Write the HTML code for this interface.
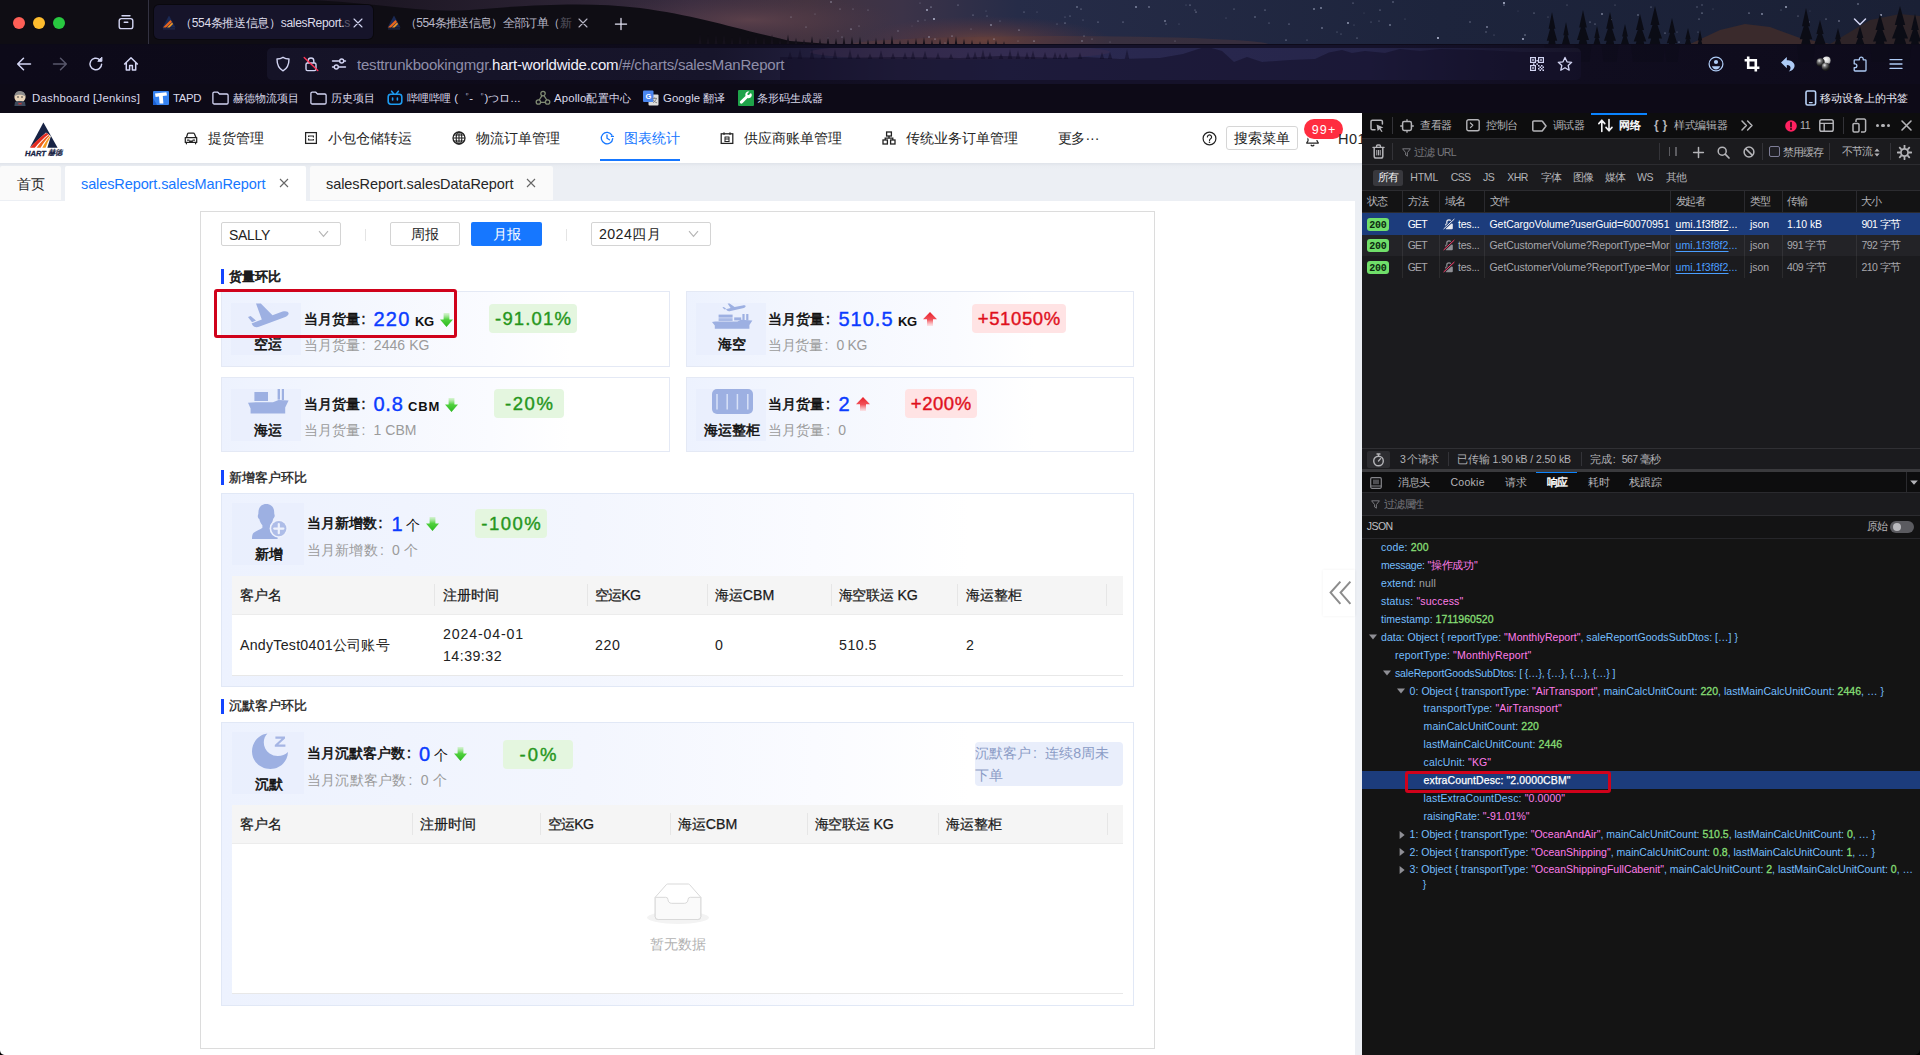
<!DOCTYPE html>
<html lang="zh">
<head>
<meta charset="utf-8">
<title>salesReport</title>
<style>
*{box-sizing:border-box;margin:0;padding:0}
html,body{width:1920px;height:1055px;overflow:hidden;background:#fff}
body{font-family:"Liberation Sans",sans-serif;font-size:14px;color:#222;position:relative}
.abs{position:absolute;display:block}
svg{overflow:visible}
.t{position:absolute;display:block;white-space:nowrap;font-family:"Liberation Sans",sans-serif}
.t span{font-family:inherit}
#chrome{position:absolute;left:0;top:0;width:1920px;height:113px;background:#120f1f;overflow:hidden}
#sky{position:absolute;left:0;top:0}
#navbar{position:absolute;left:0;top:44px;width:1920px;height:40px;background:rgba(20,17,38,.80);border-top:1px solid rgba(10,8,20,.55)}
#bmbar{position:absolute;left:0;top:84px;width:1920px;height:29px;background:rgba(16,13,28,.90)}
#urlbar{position:absolute;left:267px;top:48px;width:1314px;height:32px;border-radius:5px;background:rgba(40,38,72,.55)}
#app{position:absolute;left:0;top:113px;width:1361.7px;height:942px;background:#fff;overflow:hidden}
#apphead{position:absolute;left:0;top:0;width:1363px;height:50px;background:#fff}
#tabsbar{position:absolute;left:0;top:50px;width:1363px;height:38px;background:linear-gradient(180deg,#dfe3ea 0,#eaedf2 3px,#eceff4 6px)}
#dev{position:absolute;left:1361px;top:113px;width:559px;height:942px;overflow:hidden}
#devbg{position:absolute;left:.7px;top:0;width:559px;height:942px;background:#141414}
</style>
</head>
<body>
<div id="chrome">
<svg id="sky" width="1920" height="113" viewBox="0 0 1920 113">
<defs>
<linearGradient id="skyg" x1="0" x2="1" y1="0" y2="0">
<stop offset="0" stop-color="#15121b"/><stop offset=".2" stop-color="#1d1724"/><stop offset=".3" stop-color="#2c2334"/><stop offset=".36" stop-color="#3a2d40"/><stop offset=".42" stop-color="#43333f"/><stop offset=".47" stop-color="#3c3348"/><stop offset=".53" stop-color="#262c48"/><stop offset=".75" stop-color="#1d243c"/><stop offset="1" stop-color="#1a2035"/>
</linearGradient>
<radialGradient id="glow" cx="0.5" cy="0.5" r="0.5"><stop offset="0" stop-color="#7d4a3a" stop-opacity=".7"/><stop offset=".55" stop-color="#643a3c" stop-opacity=".38"/><stop offset="1" stop-color="#5a3540" stop-opacity="0"/></radialGradient>
<radialGradient id="cloud" cx="0.5" cy="0.5" r="0.5"><stop offset="0" stop-color="#60434c" stop-opacity=".85"/><stop offset="1" stop-color="#4a3545" stop-opacity="0"/></radialGradient>
<linearGradient id="ub" x1="0" x2="1" y1="0" y2="0"><stop offset="0" stop-color="#151327"/><stop offset=".34" stop-color="#17152b"/><stop offset=".42" stop-color="#211e3c"/><stop offset=".48" stop-color="#2a2748"/><stop offset=".56" stop-color="#2b2a52"/><stop offset=".84" stop-color="#26254a"/><stop offset=".93" stop-color="#1c1a36"/><stop offset="1" stop-color="#171529"/></linearGradient>
<clipPath id="ubc"><rect x="267" y="48" width="1314" height="32" rx="5"/></clipPath>
<clipPath id="top"><rect x="0" y="0" width="1920" height="44"/></clipPath>
</defs>
<g clip-path="url(#top)">
<rect width="1920" height="44" fill="url(#skyg)"/>
<ellipse cx="750" cy="20" rx="150" ry="26" fill="url(#cloud)"/>
<ellipse cx="985" cy="40" rx="125" ry="24" fill="url(#glow)"/>
<ellipse cx="1060" cy="45" rx="210" ry="9" fill="#6a4035" opacity=".3"/>
<circle cx="1149" cy="7" r="0.9" fill="#dfe6ff" opacity="0.38"/>
<circle cx="1702" cy="5" r="0.7" fill="#dfe6ff" opacity="0.38"/>
<circle cx="1353" cy="3" r="0.6" fill="#dfe6ff" opacity="0.60"/>
<circle cx="1057" cy="24" r="0.4" fill="#dfe6ff" opacity="0.85"/>
<circle cx="927" cy="10" r="0.9" fill="#dfe6ff" opacity="0.70"/>
<circle cx="859" cy="26" r="0.4" fill="#dfe6ff" opacity="0.94"/>
<circle cx="842" cy="37" r="0.5" fill="#dfe6ff" opacity="0.60"/>
<circle cx="1390" cy="25" r="0.7" fill="#dfe6ff" opacity="0.84"/>
<circle cx="991" cy="25" r="0.9" fill="#dfe6ff" opacity="0.46"/>
<circle cx="898" cy="31" r="0.7" fill="#dfe6ff" opacity="0.39"/>
<circle cx="1019" cy="30" r="0.6" fill="#dfe6ff" opacity="0.82"/>
<circle cx="1307" cy="40" r="0.5" fill="#dfe6ff" opacity="0.53"/>
<circle cx="1672" cy="30" r="0.5" fill="#dfe6ff" opacity="0.40"/>
<circle cx="1123" cy="22" r="0.5" fill="#dfe6ff" opacity="0.79"/>
<circle cx="1110" cy="42" r="0.4" fill="#dfe6ff" opacity="0.66"/>
<circle cx="973" cy="15" r="0.6" fill="#dfe6ff" opacity="0.60"/>
<circle cx="1858" cy="4" r="0.7" fill="#dfe6ff" opacity="0.69"/>
<circle cx="1762" cy="14" r="0.9" fill="#dfe6ff" opacity="0.56"/>
<circle cx="1341" cy="34" r="0.4" fill="#dfe6ff" opacity="0.85"/>
<circle cx="1839" cy="21" r="0.9" fill="#dfe6ff" opacity="0.39"/>
<circle cx="1602" cy="14" r="0.7" fill="#dfe6ff" opacity="0.95"/>
<circle cx="1702" cy="13" r="0.6" fill="#dfe6ff" opacity="0.88"/>
<circle cx="1175" cy="41" r="0.5" fill="#dfe6ff" opacity="0.45"/>
<circle cx="920" cy="3" r="0.5" fill="#dfe6ff" opacity="0.43"/>
<circle cx="1065" cy="17" r="0.6" fill="#dfe6ff" opacity="0.40"/>
<circle cx="1289" cy="24" r="0.5" fill="#dfe6ff" opacity="0.84"/>
<circle cx="1749" cy="13" r="0.6" fill="#dfe6ff" opacity="0.94"/>
<circle cx="1548" cy="17" r="0.5" fill="#dfe6ff" opacity="0.44"/>
<circle cx="986" cy="11" r="0.5" fill="#dfe6ff" opacity="0.36"/>
<circle cx="1713" cy="9" r="0.5" fill="#dfe6ff" opacity="0.35"/>
<circle cx="1255" cy="17" r="0.7" fill="#dfe6ff" opacity="0.54"/>
<circle cx="929" cy="37" r="0.7" fill="#dfe6ff" opacity="0.74"/>
<circle cx="1611" cy="20" r="0.9" fill="#dfe6ff" opacity="0.83"/>
<circle cx="1226" cy="18" r="0.4" fill="#dfe6ff" opacity="0.64"/>
<circle cx="1234" cy="9" r="0.5" fill="#dfe6ff" opacity="0.61"/>
<circle cx="912" cy="26" r="0.4" fill="#dfe6ff" opacity="0.35"/>
<circle cx="958" cy="5" r="0.5" fill="#dfe6ff" opacity="0.72"/>
<circle cx="868" cy="10" r="0.6" fill="#dfe6ff" opacity="0.44"/>
<circle cx="1070" cy="16" r="0.5" fill="#dfe6ff" opacity="0.63"/>
<circle cx="918" cy="21" r="0.6" fill="#dfe6ff" opacity="0.64"/>
<circle cx="1136" cy="7" r="0.9" fill="#dfe6ff" opacity="0.56"/>
<circle cx="1084" cy="36" r="0.5" fill="#dfe6ff" opacity="0.66"/>
<circle cx="1018" cy="41" r="0.5" fill="#dfe6ff" opacity="0.44"/>
<circle cx="1393" cy="2" r="0.7" fill="#dfe6ff" opacity="0.53"/>
<circle cx="1504" cy="5" r="0.5" fill="#dfe6ff" opacity="0.66"/>
<circle cx="1798" cy="16" r="0.5" fill="#dfe6ff" opacity="0.67"/>
<circle cx="1655" cy="15" r="0.5" fill="#dfe6ff" opacity="0.72"/>
<circle cx="1665" cy="33" r="0.5" fill="#dfe6ff" opacity="0.83"/>
<circle cx="1698" cy="32" r="0.5" fill="#dfe6ff" opacity="0.47"/>
<circle cx="1337" cy="32" r="0.4" fill="#dfe6ff" opacity="0.82"/>
<circle cx="1314" cy="9" r="0.7" fill="#dfe6ff" opacity="0.92"/>
<circle cx="1286" cy="40" r="0.5" fill="#dfe6ff" opacity="0.92"/>
<circle cx="1195" cy="10" r="0.5" fill="#dfe6ff" opacity="0.63"/>
<circle cx="1165" cy="21" r="0.7" fill="#dfe6ff" opacity="0.85"/>
<circle cx="1322" cy="28" r="0.9" fill="#dfe6ff" opacity="0.40"/>
<circle cx="1523" cy="39" r="0.9" fill="#dfe6ff" opacity="0.80"/>
<circle cx="1321" cy="8" r="0.9" fill="#dfe6ff" opacity="0.55"/>
<circle cx="1679" cy="42" r="0.6" fill="#dfe6ff" opacity="0.63"/>
<circle cx="1615" cy="5" r="0.5" fill="#dfe6ff" opacity="0.45"/>
<circle cx="931" cy="7" r="0.6" fill="#dfe6ff" opacity="0.83"/>
<circle cx="952" cy="36" r="0.6" fill="#dfe6ff" opacity="0.74"/>
<circle cx="1179" cy="24" r="0.5" fill="#dfe6ff" opacity="0.36"/>
<circle cx="1677" cy="32" r="0.4" fill="#dfe6ff" opacity="0.67"/>
<circle cx="1826" cy="19" r="0.5" fill="#dfe6ff" opacity="0.85"/>
<circle cx="1024" cy="12" r="0.5" fill="#dfe6ff" opacity="0.65"/>
<circle cx="1638" cy="15" r="0.7" fill="#dfe6ff" opacity="0.60"/>
<circle cx="935" cy="39" r="0.5" fill="#dfe6ff" opacity="0.89"/>
<circle cx="1525" cy="35" r="0.7" fill="#dfe6ff" opacity="0.60"/>
<circle cx="1809" cy="22" r="0.7" fill="#dfe6ff" opacity="0.44"/>
<circle cx="1357" cy="38" r="0.5" fill="#dfe6ff" opacity="0.72"/>
<circle cx="1651" cy="7" r="0.5" fill="#dfe6ff" opacity="0.63"/>
<circle cx="1595" cy="24" r="0.5" fill="#dfe6ff" opacity="0.76"/>
<circle cx="1379" cy="21" r="0.4" fill="#dfe6ff" opacity="0.88"/>
<circle cx="853" cy="9" r="0.4" fill="#dfe6ff" opacity="0.81"/>
<circle cx="1354" cy="25" r="0.4" fill="#dfe6ff" opacity="0.62"/>
<circle cx="1470" cy="22" r="0.7" fill="#dfe6ff" opacity="0.47"/>
<circle cx="1098" cy="22" r="0.6" fill="#dfe6ff" opacity="0.65"/>
<circle cx="1065" cy="23" r="0.5" fill="#dfe6ff" opacity="0.90"/>
<circle cx="1781" cy="10" r="0.6" fill="#dfe6ff" opacity="0.43"/>
<circle cx="925" cy="20" r="0.4" fill="#dfe6ff" opacity="0.75"/>
<circle cx="1265" cy="10" r="0.5" fill="#dfe6ff" opacity="0.82"/>
<circle cx="1786" cy="7" r="0.9" fill="#dfe6ff" opacity="0.74"/>
<circle cx="1196" cy="12" r="0.5" fill="#dfe6ff" opacity="0.93"/>
<circle cx="1034" cy="41" r="0.6" fill="#dfe6ff" opacity="0.88"/>
<circle cx="971" cy="29" r="0.5" fill="#dfe6ff" opacity="0.45"/>
<circle cx="1269" cy="23" r="0.5" fill="#dfe6ff" opacity="0.60"/>
<circle cx="1186" cy="5" r="0.5" fill="#dfe6ff" opacity="0.36"/>
<circle cx="1405" cy="19" r="0.4" fill="#dfe6ff" opacity="0.58"/>
<circle cx="1364" cy="13" r="0.4" fill="#dfe6ff" opacity="0.42"/>
<circle cx="1810" cy="11" r="0.4" fill="#dfe6ff" opacity="0.40"/>
<circle cx="1092" cy="39" r="0.5" fill="#dfe6ff" opacity="0.51"/>
<circle cx="934" cy="19" r="0.9" fill="#dfe6ff" opacity="0.84"/>
<circle cx="1077" cy="7" r="0.7" fill="#dfe6ff" opacity="0.69"/>
<circle cx="1567" cy="5" r="0.4" fill="#dfe6ff" opacity="0.83"/>
<circle cx="994" cy="39" r="0.5" fill="#dfe6ff" opacity="0.91"/>
<circle cx="1494" cy="35" r="0.4" fill="#dfe6ff" opacity="0.71"/>
<circle cx="1037" cy="12" r="0.4" fill="#dfe6ff" opacity="0.62"/>
<circle cx="1166" cy="24" r="0.5" fill="#dfe6ff" opacity="0.72"/>
<circle cx="838" cy="31" r="0.4" fill="#dfe6ff" opacity="0.93"/>
<circle cx="1081" cy="9" r="0.5" fill="#dfe6ff" opacity="0.73"/>
<circle cx="1380" cy="10" r="0.6" fill="#dfe6ff" opacity="0.65"/>
<circle cx="987" cy="16" r="0.4" fill="#dfe6ff" opacity="0.95"/>
<circle cx="831" cy="2" r="0.7" fill="#dfe6ff" opacity="0.68"/>
<circle cx="1000" cy="21" r="0.6" fill="#dfe6ff" opacity="0.41"/>
<circle cx="1699" cy="19" r="0.6" fill="#dfe6ff" opacity="0.68"/>
<circle cx="1776" cy="42" r="0.5" fill="#dfe6ff" opacity="0.76"/>
<circle cx="1881" cy="15" r="0.9" fill="#dfe6ff" opacity="0.79"/>
<circle cx="945" cy="43" r="0.4" fill="#dfe6ff" opacity="0.85"/>
<circle cx="806" cy="27" r="0.5" fill="#dfe6ff" opacity="0.61"/>
<circle cx="851" cy="29" r="0.6" fill="#dfe6ff" opacity="0.87"/>
<circle cx="1534" cy="13" r="0.5" fill="#dfe6ff" opacity="0.77"/>
<circle cx="840" cy="9" r="0.5" fill="#dfe6ff" opacity="0.62"/>
<circle cx="1082" cy="41" r="0.7" fill="#dfe6ff" opacity="0.54"/>
<circle cx="828" cy="38" r="0.5" fill="#dfe6ff" opacity="0.56"/>
<circle cx="791" cy="17" r="0.6" fill="#dfe6ff" opacity="0.52"/>
<circle cx="1518" cy="11" r="0.4" fill="#dfe6ff" opacity="0.40"/>
<circle cx="1697" cy="7" r="0.7" fill="#dfe6ff" opacity="0.38"/>
<circle cx="815" cy="14" r="0.5" fill="#dfe6ff" opacity="0.40"/>
<circle cx="1853" cy="37" r="0.5" fill="#dfe6ff" opacity="0.74"/>
<circle cx="1585" cy="38" r="0.6" fill="#dfe6ff" opacity="0.81"/>
<circle cx="1590" cy="22" r="0.5" fill="#dfe6ff" opacity="0.78"/>
<circle cx="1504" cy="3" r="0.9" fill="#dfe6ff" opacity="0.89"/>
<circle cx="1486" cy="32" r="0.7" fill="#dfe6ff" opacity="0.43"/>
<circle cx="1371" cy="22" r="0.4" fill="#dfe6ff" opacity="0.85"/>
<circle cx="1438" cy="38" r="0.9" fill="#dfe6ff" opacity="0.92"/>
<circle cx="1504" cy="5" r="0.4" fill="#dfe6ff" opacity="0.43"/>
<circle cx="1190" cy="5" r="0.6" fill="#dfe6ff" opacity="0.69"/>
<circle cx="1487" cy="27" r="0.9" fill="#dfe6ff" opacity="0.50"/>
<circle cx="1083" cy="20" r="0.4" fill="#dfe6ff" opacity="0.80"/>
<circle cx="1348" cy="23" r="0.9" fill="#dfe6ff" opacity="0.67"/>
<path d="M0 0 L300 0 C360 0 420 14 470 10 C540 4 590 2 640 8 C700 16 740 30 790 41 L830 44 L830 60 L0 60Z" fill="#0f0d14"/>
<path d="M700 34.3 L702 47.0 L698 47.0Z" fill="#15111b"/>
<path d="M708 35.7 L710 47.1 L706 47.1Z" fill="#15111b"/>
<path d="M716 34.1 L718 47.2 L714 47.2Z" fill="#15111b"/>
<path d="M724 34.1 L726 47.3 L722 47.3Z" fill="#15111b"/>
<path d="M732 37.2 L734 47.4 L730 47.4Z" fill="#15111b"/>
<path d="M740 34.7 L742 47.5 L738 47.5Z" fill="#15111b"/>
<path d="M748 37.4 L750 47.6 L746 47.6Z" fill="#15111b"/>
<path d="M756 35.4 L758 47.7 L754 47.7Z" fill="#15111b"/>
<path d="M764 36.5 L766 47.8 L762 47.8Z" fill="#15111b"/>
<path d="M772 34.6 L774 47.9 L770 47.9Z" fill="#15111b"/>
<path d="M780 38.6 L782 48.0 L778 48.0Z" fill="#15111b"/>
<path d="M788 34.5 L790 48.1 L786 48.1Z" fill="#15111b"/>
<path d="M796 37.7 L798 48.2 L794 48.2Z" fill="#15111b"/>
<path d="M804 39.0 L806 48.2 L802 48.2Z" fill="#15111b"/>
<path d="M812 36.2 L814 48.3 L810 48.3Z" fill="#15111b"/>
<path d="M820 38.4 L822 48.4 L818 48.4Z" fill="#15111b"/>
<path d="M828 36.5 L830 48.5 L826 48.5Z" fill="#15111b"/>
<path d="M836 38.0 L838 48.6 L834 48.6Z" fill="#15111b"/>
<path d="M844 36.5 L846 48.7 L842 48.7Z" fill="#15111b"/>
<path d="M852 36.4 L854 48.8 L850 48.8Z" fill="#15111b"/>
<path d="M860 36.8 L862 48.9 L858 48.9Z" fill="#15111b"/>
<path d="M868 39.3 L870 49.0 L866 49.0Z" fill="#15111b"/>
<path d="M876 37.7 L878 49.1 L874 49.1Z" fill="#15111b"/>
<path d="M884 37.8 L886 49.2 L882 49.2Z" fill="#15111b"/>
<path d="M892 35.4 L894 49.3 L890 49.3Z" fill="#15111b"/>
<path d="M900 39.9 L902 49.4 L898 49.4Z" fill="#15111b"/>
<path d="M908 39.4 L910 49.5 L906 49.5Z" fill="#15111b"/>
<path d="M916 38.1 L918 49.6 L914 49.6Z" fill="#15111b"/>
<path d="M924 37.1 L926 49.7 L922 49.7Z" fill="#15111b"/>
<path d="M932 39.4 L934 49.8 L930 49.8Z" fill="#15111b"/>
<path d="M940 38.6 L942 49.9 L938 49.9Z" fill="#15111b"/>
<path d="M948 37.1 L950 50.0 L946 50.0Z" fill="#15111b"/>
<path d="M956 36.1 L958 50.1 L954 50.1Z" fill="#15111b"/>
<path d="M964 38.4 L966 50.2 L962 50.2Z" fill="#15111b"/>
<path d="M972 39.7 L974 50.3 L970 50.3Z" fill="#15111b"/>
<path d="M980 40.9 L982 50.4 L978 50.4Z" fill="#15111b"/>
<path d="M988 39.1 L990 50.5 L986 50.5Z" fill="#15111b"/>
<path d="M996 40.1 L998 50.6 L994 50.6Z" fill="#15111b"/>
<path d="M1004 41.3 L1006 50.6 L1002 50.6Z" fill="#15111b"/>
<path d="M1690 44 L1720 30 L1745 24 L1770 27 L1800 38 L1830 44Z" fill="#3a2a2c"/>
<path d="M1830 44 L1870 20 L1900 14 L1920 16 L1920 44Z" fill="#2e2428"/>
<path d="M1552.0 12.0 L1555.4 28.8 L1553.9 28.8 L1557.2 40.8 L1554.9 40.8 L1559.5 60.0 L1544.5 60.0 L1549.1 40.8 L1546.8 40.8 L1550.1 28.8 L1548.6 28.8Z" fill="#0b0c15"/>
<path d="M1566.0 22.0 L1568.7 35.3 L1567.5 35.3 L1570.2 44.8 L1568.3 44.8 L1572.0 60.0 L1560.0 60.0 L1563.7 44.8 L1561.8 44.8 L1564.5 35.3 L1563.3 35.3Z" fill="#0b0c15"/>
<path d="M1583.0 10.0 L1586.8 27.5 L1585.1 27.5 L1589.0 40.0 L1586.3 40.0 L1591.5 60.0 L1574.5 60.0 L1579.7 40.0 L1577.0 40.0 L1580.9 27.5 L1579.2 27.5Z" fill="#0b0c15"/>
<path d="M1597.0 26.0 L1599.7 37.9 L1598.5 37.9 L1601.2 46.4 L1599.3 46.4 L1603.0 60.0 L1591.0 60.0 L1594.7 46.4 L1592.8 46.4 L1595.5 37.9 L1594.3 37.9Z" fill="#0b0c15"/>
<path d="M1610.0 12.0 L1613.8 28.8 L1612.1 28.8 L1616.0 40.8 L1613.3 40.8 L1618.5 60.0 L1601.5 60.0 L1606.7 40.8 L1604.0 40.8 L1607.9 28.8 L1606.2 28.8Z" fill="#0b0c15"/>
<path d="M1625.0 24.0 L1627.9 36.6 L1626.6 36.6 L1629.5 45.6 L1627.5 45.6 L1631.5 60.0 L1618.5 60.0 L1622.5 45.6 L1620.5 45.6 L1623.4 36.6 L1622.1 36.6Z" fill="#0b0c15"/>
<path d="M1640.0 14.0 L1644.0 30.1 L1642.2 30.1 L1646.3 41.6 L1643.5 41.6 L1649.0 60.0 L1631.0 60.0 L1636.5 41.6 L1633.7 41.6 L1637.8 30.1 L1636.0 30.1Z" fill="#0b0c15"/>
<path d="M1655.0 6.0 L1659.5 24.9 L1657.5 24.9 L1662.0 38.4 L1658.8 38.4 L1665.0 60.0 L1645.0 60.0 L1651.2 38.4 L1648.0 38.4 L1652.5 24.9 L1650.5 24.9Z" fill="#0b0c15"/>
<path d="M1672.0 18.0 L1675.4 32.7 L1673.9 32.7 L1677.2 43.2 L1674.9 43.2 L1679.5 60.0 L1664.5 60.0 L1669.1 43.2 L1666.8 43.2 L1670.1 32.7 L1668.6 32.7Z" fill="#0b0c15"/>
<path d="M1688.0 28.0 L1690.7 39.2 L1689.5 39.2 L1692.2 47.2 L1690.3 47.2 L1694.0 60.0 L1682.0 60.0 L1685.7 47.2 L1683.8 47.2 L1686.5 39.2 L1685.3 39.2Z" fill="#0b0c15"/>
<path d="M1700.0 30.0 L1702.2 40.5 L1701.2 40.5 L1703.5 48.0 L1701.9 48.0 L1705.0 60.0 L1695.0 60.0 L1698.1 48.0 L1696.5 48.0 L1698.8 40.5 L1697.8 40.5Z" fill="#0b0c15"/>
<path d="M1806.0 8.0 L1810.0 26.2 L1808.2 26.2 L1812.3 39.2 L1809.5 39.2 L1815.0 60.0 L1797.0 60.0 L1802.5 39.2 L1799.7 39.2 L1803.8 26.2 L1802.0 26.2Z" fill="#0b0c15"/>
<path d="M1820.0 20.0 L1823.6 34.0 L1822.0 34.0 L1825.6 44.0 L1823.1 44.0 L1828.0 60.0 L1812.0 60.0 L1816.9 44.0 L1814.4 44.0 L1818.0 34.0 L1816.4 34.0Z" fill="#0b0c15"/>
<path d="M1838.0 28.0 L1840.9 39.2 L1839.6 39.2 L1842.5 47.2 L1840.5 47.2 L1844.5 60.0 L1831.5 60.0 L1835.5 47.2 L1833.5 47.2 L1836.4 39.2 L1835.1 39.2Z" fill="#0b0c15"/>
<path d="M1860.0 26.0 L1863.4 37.9 L1861.9 37.9 L1865.2 46.4 L1862.9 46.4 L1867.5 60.0 L1852.5 60.0 L1857.1 46.4 L1854.8 46.4 L1858.1 37.9 L1856.6 37.9Z" fill="#0b0c15"/>
<path d="M1880.0 14.0 L1884.5 30.1 L1882.5 30.1 L1887.0 41.6 L1883.8 41.6 L1890.0 60.0 L1870.0 60.0 L1876.2 41.6 L1873.0 41.6 L1877.5 30.1 L1875.5 30.1Z" fill="#0b0c15"/>
<path d="M1900.0 6.0 L1905.2 24.9 L1902.8 24.9 L1908.0 38.4 L1904.4 38.4 L1911.5 60.0 L1888.5 60.0 L1895.6 38.4 L1892.0 38.4 L1897.2 24.9 L1894.8 24.9Z" fill="#0b0c15"/>
<path d="M1915.0 14.0 L1918.8 30.1 L1917.1 30.1 L1921.0 41.6 L1918.3 41.6 L1923.5 60.0 L1906.5 60.0 L1911.7 41.6 L1909.0 41.6 L1912.9 30.1 L1911.2 30.1Z" fill="#0b0c15"/>
</g>
<linearGradient id="nv" x1="0" x2="1" y1="0" y2="0"><stop offset="0" stop-color="#0d0a19"/><stop offset=".38" stop-color="#0e0b1b"/><stop offset=".5" stop-color="#15122a"/><stop offset=".72" stop-color="#15122a"/><stop offset=".82" stop-color="#100d1f"/><stop offset="1" stop-color="#0e0b1b"/></linearGradient>
<rect x="0" y="44" width="1920" height="40" fill="url(#nv)"/>
<rect x="0" y="44" width="1920" height="1" fill="#0c0a18" opacity=".8"/>
<g opacity=".35">
<path d="M1544.5 45 L1559.5 45 L1557.5 62 L1546.5 62Z" fill="#0c0b18"/>
<path d="M1574.5 45 L1591.5 45 L1589.5 62 L1576.5 62Z" fill="#0c0b18"/>
<path d="M1601.5 45 L1618.5 45 L1616.5 62 L1603.5 62Z" fill="#0c0b18"/>
<path d="M1631.0 45 L1649.0 45 L1647.0 62 L1633.0 62Z" fill="#0c0b18"/>
<path d="M1645.0 45 L1665.0 45 L1663.0 62 L1647.0 62Z" fill="#0c0b18"/>
<path d="M1664.5 45 L1679.5 45 L1677.5 62 L1666.5 62Z" fill="#0c0b18"/>
<path d="M1797.0 45 L1815.0 45 L1813.0 62 L1799.0 62Z" fill="#0c0b18"/>
<path d="M1870.0 45 L1890.0 45 L1888.0 62 L1872.0 62Z" fill="#0c0b18"/>
<path d="M1888.5 45 L1911.5 45 L1909.5 62 L1890.5 62Z" fill="#0c0b18"/>
</g>
<g clip-path="url(#ubc)">
<rect x="267" y="48" width="1314" height="32" fill="url(#ub)"/>
<ellipse cx="960" cy="52" rx="150" ry="8" fill="#4a3350" opacity=".3"/>
<path d="M780 80 L780 57 L830 58 L900 57 L960 58 L1000 56 L1060 58 L1085 57 L1120 59 L1160 58 L1183 54 L1206 46.5 L1222 51 L1234 62 L1247 57 L1262 62 L1290 60 L1315 59 L1329 52.5 L1342 50 L1352 53 L1365 51 L1385 53 L1400 49 L1420 51 L1440 49 L1480 50 L1520 52 L1581 52 L1581 80Z" fill="#0f0c24" opacity=".5"/>
<path d="M790 51.5 L792.2 59 L787.8 59Z" fill="#0f0c24" opacity=".5"/>
<path d="M800 49.0 L802.2 59 L797.8 59Z" fill="#0f0c24" opacity=".5"/>
<path d="M812 49.0 L814.2 59 L809.8 59Z" fill="#0f0c24" opacity=".5"/>
<path d="M823 52.1 L825.2 59 L820.8 59Z" fill="#0f0c24" opacity=".5"/>
<path d="M835 49.4 L837.2 59 L832.8 59Z" fill="#0f0c24" opacity=".5"/>
<path d="M850 49.3 L852.2 59 L847.8 59Z" fill="#0f0c24" opacity=".5"/>
<path d="M858 53.6 L860.2 59 L855.8 59Z" fill="#0f0c24" opacity=".5"/>
<path d="M870 53.5 L872.2 59 L867.8 59Z" fill="#0f0c24" opacity=".5"/>
<path d="M881 50.3 L883.2 59 L878.8 59Z" fill="#0f0c24" opacity=".5"/>
<path d="M893 52.7 L895.2 59 L890.8 59Z" fill="#0f0c24" opacity=".5"/>
<path d="M905 52.2 L907.2 59 L902.8 59Z" fill="#0f0c24" opacity=".5"/>
<path d="M913 51.0 L915.2 59 L910.8 59Z" fill="#0f0c24" opacity=".5"/>
<path d="M925 50.8 L927.2 59 L922.8 59Z" fill="#0f0c24" opacity=".5"/>
<path d="M938 52.6 L940.2 59 L935.8 59Z" fill="#0f0c24" opacity=".5"/>
<path d="M951 53.4 L953.2 59 L948.8 59Z" fill="#0f0c24" opacity=".5"/>
<path d="M968 52.2 L970.2 59 L965.8 59Z" fill="#0f0c24" opacity=".5"/>
<path d="M975 51.5 L977.2 59 L972.8 59Z" fill="#0f0c24" opacity=".5"/>
<path d="M983 49.6 L985.2 59 L980.8 59Z" fill="#0f0c24" opacity=".5"/>
<path d="M990 52.0 L992.2 59 L987.8 59Z" fill="#0f0c24" opacity=".5"/>
<path d="M1001 53.2 L1003.2 59 L998.8 59Z" fill="#0f0c24" opacity=".5"/>
<path d="M1010 49.3 L1012.2 59 L1007.8 59Z" fill="#0f0c24" opacity=".5"/>
<path d="M1018 50.6 L1020.2 59 L1015.8 59Z" fill="#0f0c24" opacity=".5"/>
<path d="M1027 52.0 L1029.2 59 L1024.8 59Z" fill="#0f0c24" opacity=".5"/>
<path d="M1033 50.4 L1035.2 59 L1030.8 59Z" fill="#0f0c24" opacity=".5"/>
<path d="M1045 51.9 L1047.2 59 L1042.8 59Z" fill="#0f0c24" opacity=".5"/>
<path d="M1055 52.1 L1057.2 59 L1052.8 59Z" fill="#0f0c24" opacity=".5"/>
<path d="M1060 53.4 L1062.2 59 L1057.8 59Z" fill="#0f0c24" opacity=".5"/>
<path d="M1066 52.3 L1068.2 59 L1063.8 59Z" fill="#0f0c24" opacity=".5"/>
<path d="M1080 52.4 L1082.2 59 L1077.8 59Z" fill="#0f0c24" opacity=".5"/>
<path d="M1102 52.3 L1104.2 59 L1099.8 59Z" fill="#0f0c24" opacity=".5"/>
<path d="M1110 52.0 L1112.2 59 L1107.8 59Z" fill="#0f0c24" opacity=".5"/>
<path d="M1127 49.3 L1129.2 59 L1124.8 59Z" fill="#0f0c24" opacity=".5"/>
</g>
<rect x="0" y="84" width="1920" height="29" fill="#0d0a17"/>
</svg>
<div class="abs" style="left:13px;top:16.5px;width:12px;height:12px;border-radius:50%;background:#fe5f57"></div>
<div class="abs" style="left:33px;top:16.5px;width:12px;height:12px;border-radius:50%;background:#febc2e"></div>
<div class="abs" style="left:53px;top:16.5px;width:12px;height:12px;border-radius:50%;background:#28c840"></div>
<svg class="abs" style="left:118px;top:14px;" width="16" height="16" viewBox="0 0 16 16"><rect x="1.2" y="4.6" width="13.6" height="10" rx="2.2" fill="none" stroke="#d3d5f3" stroke-width="1.4"/><path d="M4 1.7 H12" stroke="#d3d5f3" stroke-width="1.4" stroke-linecap="round"/><path d="M6.2 8.3 H9.8" stroke="#d3d5f3" stroke-width="1.4" stroke-linecap="round"/></svg>
<div class="abs" style="left:148px;top:0px;width:1px;height:44px;background:rgba(120,120,150,.35)"></div>
<div class="abs" style="left:154px;top:5px;width:219px;height:34px;background:#16142a;border-radius:5px;box-shadow:0 0 0 1px rgba(0,0,0,.35)"></div>
<svg class="abs" style="left:161px;top:14px;" width="16" height="16" viewBox="0 0 16 16">
<path d="M8 1.5 L14.5 13.5 L1.5 13.5Z" fill="#1b2a55"/>
<path d="M2 13.5 L9.5 6 L11 8 L5 13.5Z" fill="#e8631c"/>
<path d="M6 13.5 L11.2 8.6 L12 10 L8.5 13.5Z" fill="#f59a23"/>
<rect x="2" y="14.3" width="12" height="1.2" fill="#26345f" opacity=".7"/></svg>
<span class="t" style="left:184px;top:14.7px;font-size:12px;line-height:17px;color:#dcdbe9;letter-spacing:-0.32px;margin-left:-4px;">（554条推送信息）salesReport.<span style="opacity:.35">s</span></span>
<svg class="abs" style="left:352px;top:16.5px;" width="12" height="12" viewBox="0 0 12 12"><path d="M2 2 L10 10 M10 2 L2 10" stroke="#d3d5f3" stroke-width="1.1" stroke-linecap="round"/></svg>
<svg class="abs" style="left:386px;top:14px;" width="16" height="16" viewBox="0 0 16 16">
<path d="M8 1.5 L14.5 13.5 L1.5 13.5Z" fill="#1b2a55"/>
<path d="M2 13.5 L9.5 6 L11 8 L5 13.5Z" fill="#e8631c"/>
<path d="M6 13.5 L11.2 8.6 L12 10 L8.5 13.5Z" fill="#f59a23"/>
<rect x="2" y="14.3" width="12" height="1.2" fill="#26345f" opacity=".7"/></svg>
<span class="t" style="left:409px;top:14.7px;font-size:12px;line-height:17px;color:#b9b8c8;letter-spacing:-0.63px;margin-left:-4px;">（554条推送信息）全部订单（<span style="opacity:.4">新</span></span>
<svg class="abs" style="left:577px;top:16.5px;" width="12" height="12" viewBox="0 0 12 12"><path d="M2 2 L10 10 M10 2 L2 10" stroke="#b9b8c8" stroke-width="1.1" stroke-linecap="round"/></svg>
<svg class="abs" style="left:614px;top:16.5px;" width="14" height="14" viewBox="0 0 14 14"><path d="M7 1.4 V12.6 M1.4 7 H12.6" stroke="#e4e3f4" stroke-width="1.25" stroke-linecap="round"/></svg>
<svg class="abs" style="left:1853px;top:17px;" width="14" height="10" viewBox="0 0 14 10"><path d="M1.5 2 L7 7.5 L12.5 2" fill="none" stroke="#d3d5f3" stroke-width="1.5" stroke-linecap="round" stroke-linejoin="round"/></svg>
<svg class="abs" style="left:16px;top:56px;" width="16" height="16" viewBox="0 0 16 16"><path d="M14.5 8 H2 M7.5 2.2 L1.7 8 L7.5 13.8" fill="none" stroke="#d3d5f3" stroke-width="1.5" stroke-linecap="round" stroke-linejoin="round"/></svg>
<svg class="abs" style="left:52px;top:56px;" width="16" height="16" viewBox="0 0 16 16"><path d="M1.5 8 H14 M8.5 2.2 L14.3 8 L8.5 13.8" fill="none" stroke="#d3d5f3" stroke-width="1.5" stroke-linecap="round" stroke-linejoin="round" opacity=".38"/></svg>
<svg class="abs" style="left:88px;top:56px;" width="16" height="16" viewBox="0 0 16 16"><path d="M13.6 8.2 A5.8 5.8 0 1 1 11.6 3.6" fill="none" stroke="#d3d5f3" stroke-width="1.5" stroke-linecap="round"/><path d="M13.9 1.2 V5.3 H9.8Z" fill="#d3d5f3" stroke="#d3d5f3" stroke-width="1" stroke-linejoin="round"/></svg>
<svg class="abs" style="left:123px;top:56px;" width="16" height="16" viewBox="0 0 16 16"><path d="M1.6 8 L8 1.8 L14.4 8 M3.3 6.8 V14 H6.6 V9.6 H9.4 V14 H12.7 V6.8" fill="none" stroke="#d3d5f3" stroke-width="1.5" stroke-linecap="round" stroke-linejoin="round"/></svg>
<svg class="abs" style="left:275px;top:56px;" width="16" height="16" viewBox="0 0 16 16"><path d="M8 1.3 C10 2.6 12 3 14 3 C14 8.5 12.3 12.6 8 14.8 C3.7 12.6 2 8.5 2 3 C4 3 6 2.6 8 1.3Z" fill="none" stroke="#d3d5f3" stroke-width="1.4" stroke-linejoin="round"/></svg>
<svg class="abs" style="left:303px;top:56px;" width="16" height="16" viewBox="0 0 16 16"><rect x="3" y="7" width="10" height="7.6" rx="1.6" fill="none" stroke="#d3d5f3" stroke-width="1.4"/><path d="M5.2 7 V4.8 a2.8 2.8 0 0 1 5.6 0 V7" fill="none" stroke="#d3d5f3" stroke-width="1.4"/><path d="M1.2 1.6 L14.8 14.6" stroke="#ff3355" stroke-width="1.4" stroke-linecap="round"/></svg>
<svg class="abs" style="left:331px;top:56px;" width="16" height="16" viewBox="0 0 16 16"><path d="M1.5 5 H8.5 M12.8 5 H14.5 M1.5 11 H3.2 M7.5 11 H14.5" stroke="#d3d5f3" stroke-width="1.4" stroke-linecap="round"/><circle cx="10.7" cy="5" r="2" fill="none" stroke="#d3d5f3" stroke-width="1.4"/><circle cx="5.3" cy="11" r="2" fill="none" stroke="#d3d5f3" stroke-width="1.4"/></svg>
<span class="t" style="left:357px;top:54px;font-size:15px;line-height:21px;color:#f1f0fb;letter-spacing:-0.21px;"><span style="color:#8f8ea9">testtrunkbookingmgr.</span>hart-worldwide.com<span style="color:#8f8ea9">/#/charts/salesManReport</span></span>
<svg class="abs" style="left:1530px;top:57px;" width="14" height="14" viewBox="0 0 14 14"><rect x="0.6" y="0.6" width="4.8" height="4.8" fill="none" stroke="#d3d5f3" stroke-width="1.2"/><rect x="2.2" y="2.2" width="1.6" height="1.6" fill="#d3d5f3"/><rect x="8.6" y="0.6" width="4.8" height="4.8" fill="none" stroke="#d3d5f3" stroke-width="1.2"/><rect x="10.2" y="2.2" width="1.6" height="1.6" fill="#d3d5f3"/><rect x="0.6" y="8.6" width="4.8" height="4.8" fill="none" stroke="#d3d5f3" stroke-width="1.2"/><rect x="2.2" y="10.2" width="1.6" height="1.6" fill="#d3d5f3"/><rect x="8" y="8" width="1.5" height="1.5" fill="#d3d5f3"/><rect x="11" y="8" width="1.5" height="1.5" fill="#d3d5f3"/><rect x="9.5" y="9.5" width="1.5" height="1.5" fill="#d3d5f3"/><rect x="12.5" y="9.5" width="1.5" height="1.5" fill="#d3d5f3"/><rect x="8" y="11" width="1.5" height="1.5" fill="#d3d5f3"/><rect x="11" y="11" width="1.5" height="1.5" fill="#d3d5f3"/><rect x="9.5" y="12.5" width="1.5" height="1.5" fill="#d3d5f3"/><rect x="12.5" y="12.5" width="1.5" height="1.5" fill="#d3d5f3"/><rect x="6.4" y="3" width="1.5" height="1.5" fill="#d3d5f3"/><rect x="6.4" y="6.4" width="1.5" height="1.5" fill="#d3d5f3"/><rect x="3" y="6.4" width="1.5" height="1.5" fill="#d3d5f3"/></svg>
<svg class="abs" style="left:1557px;top:56px;" width="16" height="16" viewBox="0 0 16 16"><path d="M8 1.4 L10 5.8 L14.7 6.3 L11.2 9.5 L12.2 14.2 L8 11.8 L3.8 14.2 L4.8 9.5 L1.3 6.3 L6 5.8Z" fill="none" stroke="#d3d5f3" stroke-width="1.3" stroke-linejoin="round"/></svg>
<svg class="abs" style="left:1708px;top:56px;" width="16" height="16" viewBox="0 0 16 16"><circle cx="8" cy="8" r="6.9" fill="none" stroke="#aecbf5" stroke-width="1.25"/><circle cx="8" cy="6" r="2.1" fill="#aecbf5"/><path d="M3.9 10.2 H12.1 C11.6 12.2 10 13.4 8 13.4 C6 13.4 4.4 12.2 3.9 10.2Z" fill="#aecbf5"/></svg>
<svg class="abs" style="left:1744px;top:56px;" width="16" height="16" viewBox="0 0 16 16"><path d="M4.2 0.6 V11.8 H15.4 M0.6 4.2 H11.8 V15.4" fill="none" stroke="#ffffff" stroke-width="2.6"/></svg>
<svg class="abs" style="left:1780px;top:56px;" width="16" height="16" viewBox="0 0 16 16"><path d="M6.8 1 L1 6.6 L6.8 12.2 V9 C9.6 9 11 10.2 10.4 13 C10.2 14 9.6 14.8 8.8 15.4 C13 14.8 15.2 11.6 14.4 8.6 C13.6 5.6 10.6 4.4 6.8 4.3Z" fill="#aecbf5"/></svg>
<svg class="abs" style="left:1816px;top:56px;" width="16" height="16" viewBox="0 0 16 16"><defs><radialGradient id="ballw" cx=".4" cy=".35" r=".75"><stop offset="0" stop-color="#fff"/><stop offset=".6" stop-color="#cfcfcf"/><stop offset="1" stop-color="#777"/></radialGradient><radialGradient id="ball" cx=".35" cy=".3" r=".8"><stop offset="0" stop-color="#e8e8e8"/><stop offset=".3" stop-color="#777"/><stop offset=".7" stop-color="#222"/><stop offset="1" stop-color="#0c0c0c"/></radialGradient></defs><circle cx="10.6" cy="4.6" r="4" fill="url(#ballw)"/><circle cx="4.6" cy="6.4" r="4.1" fill="url(#ball)"/><circle cx="9.8" cy="10.8" r="4.1" fill="url(#ball)"/></svg>
<svg class="abs" style="left:1852px;top:56px;" width="16" height="16" viewBox="0 0 16 16"><path d="M7.4 3.8 V3 a1.9 1.9 0 1 1 3.8 0 V3.8 H13.2 a.8 .8 0 0 1 .8 .8 V14.2 a.8 .8 0 0 1-.8 .8 H3 a.8 .8 0 0 1-.8-.8 V11.6 H3 a1.9 1.9 0 1 0 0-3.8 H2.2 V4.6 a.8 .8 0 0 1 .8-.8Z" fill="none" stroke="#aecbf5" stroke-width="1.3" stroke-linejoin="round"/></svg>
<svg class="abs" style="left:1888px;top:56px;" width="16" height="16" viewBox="0 0 16 16"><path d="M2 3.6 H14 M2 8 H14 M2 12.4 H14" stroke="#aecbf5" stroke-width="1.3" stroke-linecap="round"/></svg>
<svg class="abs" style="left:12px;top:90px;" width="16" height="16" viewBox="0 0 16 16"><circle cx="8" cy="7" r="5.6" fill="#e8d3b8"/><path d="M2.6 6 C3 2 6 .8 8.2 1 C11.5 1.2 13.4 3.4 13.3 6.2 C11 4.4 6 4 2.6 6Z" fill="#8d8d8d"/><path d="M3 12 C5 10.5 11 10.5 13 12 L13.6 16 H2.4Z" fill="#3d4a5c"/><path d="M6.6 12.6 L8 13.6 L9.4 12.6 L9.4 14.8 L8 13.9 L6.6 14.8Z" fill="#d33"/><circle cx="6" cy="7" r=".8" fill="#333"/><circle cx="10" cy="7" r=".8" fill="#333"/></svg>
<span class="t" style="left:32px;top:90px;font-size:11.4px;line-height:16px;color:#dad9ea;letter-spacing:0.22px;">Dashboard [Jenkins]</span>
<svg class="abs" style="left:153px;top:90px;" width="16" height="16" viewBox="0 0 16 16"><rect x="0" y="1" width="16" height="14" rx="1" fill="#3582f1"/><path d="M2 3.6 L13.4 2.2 L14 5.4 L9.8 6 L10.4 13.4 L6.6 13.6 L6 6.6 L2.6 7Z" fill="#fff"/><path d="M0 8 L4 15 H0Z" fill="#1c5fd0"/></svg>
<span class="t" style="left:173px;top:90px;font-size:11.4px;line-height:16px;color:#dad9ea;letter-spacing:-0.39px;">TAPD</span>
<svg class="abs" style="left:212.4px;top:90px;" width="17" height="16" viewBox="0 0 17 16"><path d="M.9 3.5 a1.3 1.3 0 0 1 1.3-1.3 h3.6 l1.7 1.8 h7.3 a1.3 1.3 0 0 1 1.3 1.3 v7.4 a1.3 1.3 0 0 1-1.3 1.3 h-12.6 a1.3 1.3 0 0 1-1.3-1.3z" fill="none" stroke="#d3d5f3" stroke-width="1.3" stroke-linejoin="round"/></svg>
<span class="t" style="left:233px;top:90px;font-size:11.4px;line-height:16px;color:#dad9ea;letter-spacing:0.17px;margin-left:-.5px;">赫德物流项目</span>
<svg class="abs" style="left:310.4px;top:90px;" width="17" height="16" viewBox="0 0 17 16"><path d="M.9 3.5 a1.3 1.3 0 0 1 1.3-1.3 h3.6 l1.7 1.8 h7.3 a1.3 1.3 0 0 1 1.3 1.3 v7.4 a1.3 1.3 0 0 1-1.3 1.3 h-12.6 a1.3 1.3 0 0 1-1.3-1.3z" fill="none" stroke="#d3d5f3" stroke-width="1.3" stroke-linejoin="round"/></svg>
<span class="t" style="left:331px;top:90px;font-size:11.4px;line-height:16px;color:#dad9ea;letter-spacing:0.12px;margin-left:-.5px;">历史项目</span>
<svg class="abs" style="left:387px;top:90px;" width="16" height="16" viewBox="0 0 16 16"><rect x="1.2" y="4.2" width="13.6" height="10" rx="2.6" fill="none" stroke="#1d9bf0" stroke-width="1.6"/><path d="M4.6 1.2 L6.6 3.8 M11.4 1.2 L9.4 3.8" stroke="#1d9bf0" stroke-width="1.5" stroke-linecap="round"/><path d="M5.6 8 V10 M10.4 8 V10" stroke="#1d9bf0" stroke-width="1.6" stroke-linecap="round"/></svg>
<span class="t" style="left:407px;top:90px;font-size:11.4px;line-height:16px;color:#dad9ea;letter-spacing:0.13px;margin-left:-.5px;">哔哩哔哩 (゜-゜)つロ...</span>
<svg class="abs" style="left:535px;top:90px;" width="16" height="16" viewBox="0 0 16 16"><circle cx="8" cy="3.6" r="2.2" fill="none" stroke="#7f8a72" stroke-width="1.3"/><circle cx="3.4" cy="12" r="2.2" fill="none" stroke="#7f8a72" stroke-width="1.3"/><circle cx="12.6" cy="12" r="2.2" fill="none" stroke="#7f8a72" stroke-width="1.3"/><path d="M7 5.6 L4.2 10 M9 5.6 L11.8 10 M5.6 12.4 H10.4" stroke="#7f8a72" stroke-width="1.3"/></svg>
<span class="t" style="left:554px;top:90px;font-size:11.4px;line-height:16px;color:#dad9ea;letter-spacing:0.13px;">Apollo配置中心</span>
<svg class="abs" style="left:643px;top:90px;" width="16" height="16" viewBox="0 0 16 16"><rect x="5.5" y="4.5" width="10" height="11" rx="1" fill="#dcdcdc"/><rect x="0" y=".5" width="10.5" height="11.5" rx="1" fill="#4a86f0"/><text x="2.6" y="9" font-family="Liberation Sans,sans-serif" font-size="7.5" font-weight="700" fill="#fff">G</text><path d="M9.4 8.4 H14 M11.7 7.4 V8.4 M10 12.6 C12 11.6 13 10 13.4 8.4 M10.4 10 C11 11.4 12.4 12.4 14 12.8" stroke="#7a7a7a" stroke-width=".9" fill="none"/></svg>
<span class="t" style="left:663px;top:90px;font-size:11.4px;line-height:16px;color:#dad9ea;letter-spacing:0.07px;">Google 翻译</span>
<svg class="abs" style="left:738px;top:90px;" width="16" height="16" viewBox="0 0 16 16"><rect width="16" height="16" rx="1" fill="#1fa34a"/><path d="M12.9 3.1 L10.9 5.1 L9.6 4.9 L9.4 3.6 L11.4 1.6 C9.9 1.2 8.3 1.9 7.6 3.3 C7.2 4.2 7.2 5.1 7.5 5.9 L2.3 11.1 C1.7 11.7 1.7 12.6 2.3 13.2 C2.9 13.8 3.8 13.8 4.4 13.2 L9.6 8 C10.5 8.3 11.5 8.2 12.3 7.7 C13.5 6.9 14 5.5 13.7 4.2Z" fill="#fff"/></svg>
<span class="t" style="left:757px;top:90px;font-size:11.4px;line-height:16px;color:#dad9ea;letter-spacing:0.17px;margin-left:-.5px;">条形码生成器</span>
<svg class="abs" style="left:1805px;top:90px;" width="12" height="16" viewBox="0 0 12 16"><rect x="1" y="1" width="9.6" height="14" rx="1.6" fill="none" stroke="#b9d2f7" stroke-width="1.6"/><path d="M4.4 12.6 H7.2" stroke="#b9d2f7" stroke-width="1.2" stroke-linecap="round"/></svg>
<span class="t" style="left:1820px;top:90px;font-size:11.4px;line-height:16px;color:#eeedf8;letter-spacing:0.12px;margin-left:-.5px;">移动设备上的书签</span>
</div>
<div id="app">
<div id="apphead"></div>
<div id="tabsbar"></div>
<svg class="abs" style="left:22px;top:7px;" width="44" height="40" viewBox="0 0 44 40"><path d="M21.4 2.6 L35.6 27.8 H7.8Z" fill="#172345"/>
<path d="M7.2 28 L24 12.4 L28.9 15.9 L25.3 28Z" fill="#fff"/>
<path d="M8 27.8 C13 22 19 16.4 24.2 13 L26.5 14.2 C21.6 18 16.6 23 12.8 27.8Z" fill="#e22a1f"/>
<path d="M14.6 27.8 C18 23 22.4 18.4 26.7 14.9 L27.7 15.7 C24.2 19.4 21 23.4 18.6 27.8Z" fill="#f0641e"/>
<path d="M20.3 27.8 C22.4 23.6 25 19.6 27.7 16.4 L28.4 17 C26.4 20.4 24.8 24 23.6 27.8Z" fill="#f59b1e"/></svg>
<span class="t" style="left:25px;top:35.1px;font-size:7.6px;line-height:11px;color:#172345;font-weight:700;letter-spacing:0.01px;font-style:italic;-webkit-text-stroke:.3px #172345;">HART</span>
<span class="t" style="left:47.5px;top:35.23px;font-size:7.4px;line-height:10px;color:#172345;font-weight:700;letter-spacing:0.5px;font-style:italic;">赫德</span>
<svg class="abs" style="left:184px;top:17.7px;" width="14" height="14" viewBox="0 0 14 14"><path d="M2.4 6.6 L3.6 2.8 a1.2 1.2 0 0 1 1.1-.8 h4.6 a1.2 1.2 0 0 1 1.1.8 L12 6.6 M1.3 6.6 H12.7 V11.4 H1.3Z M2.4 11.4 V12.8 M11.6 11.4 V12.8 M3.4 9 H5 M9 9 H10.6 M5.6 10 H8.4" fill="none" stroke="#222" stroke-width="1.25" stroke-linejoin="round" stroke-linecap="round"/></svg>
<span class="t" style="left:208px;top:15.49px;font-size:14.2px;line-height:20px;color:#262626;margin-left:-.5px;">提货管理</span>
<svg class="abs" style="left:304px;top:17.7px;" width="14" height="14" viewBox="0 0 14 14"><rect x="1.6" y="1.6" width="10.8" height="10.8" fill="none" stroke="#222" stroke-width="1.25"/><path d="M4.6 6 V5 H9.4 V6.6 M9.4 8 V9 H4.6 V7.4" fill="none" stroke="#222" stroke-width="1.1"/></svg>
<span class="t" style="left:328px;top:15.49px;font-size:14.2px;line-height:20px;color:#262626;margin-left:-.5px;">小包仓储转运</span>
<svg class="abs" style="left:452px;top:17.7px;" width="14" height="14" viewBox="0 0 14 14"><circle cx="7" cy="7" r="6" fill="none" stroke="#222" stroke-width="1.3"/><ellipse cx="7" cy="7" rx="2.8" ry="6" fill="none" stroke="#222" stroke-width="1.1"/><path d="M1 7 H13 M2 4 H12 M2 10 H12 M7 1 V13" stroke="#222" stroke-width="1.1"/></svg>
<span class="t" style="left:476px;top:15.49px;font-size:14.2px;line-height:20px;color:#262626;margin-left:-.5px;">物流订单管理</span>
<svg class="abs" style="left:600px;top:17.7px;" width="14" height="14" viewBox="0 0 14 14"><path d="M11.9 4.2 A5.7 5.7 0 1 0 12.7 7.6" fill="none" stroke="#1677ff" stroke-width="1.3" stroke-linecap="round"/><path d="M7 3.8 V7.2 L9.4 8.8" fill="none" stroke="#1677ff" stroke-width="1.3" stroke-linecap="round"/><path d="M11.4 5.4 H13.4" stroke="#1677ff" stroke-width="1.3" stroke-linecap="round"/></svg>
<span class="t" style="left:624px;top:15.49px;font-size:14.2px;line-height:20px;color:#1677ff;margin-left:-.5px;">图表统计</span>
<svg class="abs" style="left:720px;top:17.7px;" width="14" height="14" viewBox="0 0 14 14"><rect x="1.2" y="2.8" width="11.6" height="9.6" fill="none" stroke="#222" stroke-width="1.25"/><path d="M4 1.2 V4 M10 1.2 V4 M4.6 6 H9.4 M5 6 V10 M9 6 V10 M5 8 H9 M4.4 10.4 H9.6" stroke="#222" stroke-width="1.05" fill="none"/></svg>
<span class="t" style="left:744px;top:15.49px;font-size:14.2px;line-height:20px;color:#262626;margin-left:-.5px;">供应商账单管理</span>
<svg class="abs" style="left:882px;top:17.7px;" width="14" height="14" viewBox="0 0 14 14"><rect x="4.6" y="1" width="4.8" height="4" fill="none" stroke="#222" stroke-width="1.3"/><rect x="1" y="9" width="4.4" height="4" fill="none" stroke="#222" stroke-width="1.3"/><rect x="8.6" y="9" width="4.4" height="4" fill="none" stroke="#222" stroke-width="1.3"/><path d="M7 5 V7.2 M3.2 9 V7.2 H10.8 V9" fill="none" stroke="#222" stroke-width="1.3"/></svg>
<span class="t" style="left:906px;top:15.49px;font-size:14.2px;line-height:20px;color:#262626;margin-left:-.5px;">传统业务订单管理</span>
<div class="abs" style="left:600px;top:46px;width:80px;height:2px;background:#1677ff"></div>
<span class="t" style="left:1058px;top:15.49px;font-size:14.2px;line-height:20px;color:#262626;letter-spacing:-0.04px;margin-left:-.5px;">更多···</span>
<svg class="abs" style="left:1202px;top:17.8px;" width="15" height="15" viewBox="0 0 15 15"><circle cx="7.5" cy="7.5" r="6.4" fill="none" stroke="#222" stroke-width="1.2"/><path d="M5.4 6 a2.1 2.1 0 1 1 3.2 1.8 C7.8 8.3 7.5 8.7 7.5 9.4" fill="none" stroke="#222" stroke-width="1.2" stroke-linecap="round"/><circle cx="7.5" cy="11.3" r=".8" fill="#222"/></svg>
<div class="abs" style="left:1226px;top:13px;width:71.5px;height:24px;border:1px solid #d6d6d6;border-radius:3px;background:#fff"></div>
<span class="t" style="left:1234px;top:14.99px;font-size:14.2px;line-height:20px;color:#222;margin-left:-.5px;">搜索菜单</span>
<svg class="abs" style="left:1304.5px;top:17px;" width="15" height="17" viewBox="0 0 15 17"><path d="M1.8 13.2 H13.2 V12.6 L12 11 V6.8 a4.5 4.5 0 0 0-9 0 V11 L1.8 12.6Z" fill="none" stroke="#222" stroke-width="1.2" stroke-linejoin="round"/><path d="M5.9 14.8 a1.7 1.7 0 0 0 3.2 0" fill="none" stroke="#222" stroke-width="1.2"/></svg>
<div class="abs" style="left:1304px;top:6px;width:39px;height:20px;background:#ff2d3f;border-radius:10px;box-shadow:0 0 0 1px #fff"></div>
<span class="t" style="left:1311.63px;top:7.5px;font-size:12.5px;line-height:18px;color:#fff;letter-spacing:1.26px;">99+</span>
<span class="t" style="left:1338px;top:16px;font-size:14.5px;line-height:20px;color:#262626;letter-spacing:0.46px;">H01</span>
<div class="abs" style="left:0px;top:53px;width:61px;height:34.2px;background:#fafafa;border-radius:2px 2px 0 0"></div>
<span class="t" style="left:17px;top:61.29px;font-size:14.2px;line-height:20px;color:#262626;margin-left:-.5px;">首页</span>
<div class="abs" style="left:65px;top:53px;width:241px;height:36px;background:#fff;border-radius:2px 2px 0 0"></div>
<span class="t" style="left:81px;top:60.5px;font-size:14.5px;line-height:20px;color:#1677ff;letter-spacing:-0.1px;">salesReport.salesManReport</span>
<svg class="abs" style="left:279px;top:65px;" width="10" height="10" viewBox="0 0 10 10"><path d="M1 1 L9 9 M9 1 L1 9" stroke="#666" stroke-width="1.1"/></svg>
<div class="abs" style="left:310px;top:53px;width:243.4px;height:34.2px;background:#fafafa;border-radius:2px 2px 0 0"></div>
<span class="t" style="left:326px;top:60.5px;font-size:14.5px;line-height:20px;color:#262626;letter-spacing:-0.07px;">salesReport.salesDataReport</span>
<svg class="abs" style="left:526px;top:65px;" width="10" height="10" viewBox="0 0 10 10"><path d="M1 1 L9 9 M9 1 L1 9" stroke="#666" stroke-width="1.1"/></svg>
<div class="abs" style="left:1355px;top:88px;width:7px;height:854px;background:#eceff4"></div>
<div class="abs" style="left:200px;top:98px;width:955px;height:838px;border:1px solid #dcdcdc;background:#fff"></div>
<div class="abs" style="left:221px;top:109px;width:120px;height:24px;border:1px solid #d4d4d4;border-radius:2px;background:#fff"></div>
<span class="t" style="left:229px;top:111.5px;font-size:14px;line-height:20px;color:#222;letter-spacing:-0.31px;">SALLY</span>
<svg class="abs" style="left:318px;top:117px;" width="11" height="8" viewBox="0 0 11 8"><path d="M1 1.2 L5.5 6.4 L10 1.2" fill="none" stroke="#b5b5b5" stroke-width="1.1"/></svg>
<div class="abs" style="left:365px;top:116px;width:1px;height:12px;background:#e4e4e4"></div>
<div class="abs" style="left:390px;top:109px;width:70px;height:24px;border:1px solid #d4d4d4;border-radius:2px;background:#fff"></div>
<span class="t" style="left:411px;top:110.79px;font-size:14.2px;line-height:20px;color:#222;">周报</span>
<div class="abs" style="left:471px;top:109px;width:71px;height:24px;background:#1677ff;border-radius:2px"></div>
<span class="t" style="left:492.5px;top:110.79px;font-size:14.2px;line-height:20px;color:#fff;">月报</span>
<div class="abs" style="left:566px;top:116px;width:1px;height:12px;background:#e4e4e4"></div>
<div class="abs" style="left:591px;top:109px;width:120px;height:24px;border:1px solid #d4d4d4;border-radius:2px;background:#fff"></div>
<span class="t" style="left:599px;top:110.79px;font-size:14.2px;line-height:20px;color:#222;letter-spacing:0.41px;">2024四月</span>
<svg class="abs" style="left:688px;top:117px;" width="11" height="8" viewBox="0 0 11 8"><path d="M1 1.2 L5.5 6.4 L10 1.2" fill="none" stroke="#b5b5b5" stroke-width="1.1"/></svg>
<div class="abs" style="left:221px;top:156px;width:3px;height:15px;background:#1445ff"></div>
<span class="t" style="left:229px;top:154.95px;font-size:13px;line-height:18px;color:#1a1a1a;margin-left:-.5px;-webkit-text-stroke:.7px #1a1a1a;">货量环比</span>
<div class="abs" style="left:221px;top:178px;width:449px;height:76px;border:1px solid #e4e9f5;background:linear-gradient(90deg,#edf2fe 0%,#f4f7fe 30%,#fafbff 60%,#fff 78%)"></div>
<div class="abs" style="left:231px;top:190px;width:70px;height:52px;background:rgba(228,235,252,.45)"></div>
<svg class="abs" style="left:247.5px;top:190px;" width="41" height="25" viewBox="0 0 41 25"><path d="M8 0.5 H12.8 L24.5 12.2 L34.6 8.6 C37.6 7.6 40.4 8.4 40.6 10.2 C40.8 11.8 39.4 13.2 36.6 14.3 L11.6 23.6 C9 24.6 6.4 24.4 5 22.8 L3.6 20.6 L13.8 16.4Z" fill="#9db0e2"/><path d="M0 14 L2.6 13 L8 17.6 L4 19.2Z" fill="#9db0e2"/></svg>
<span class="t" style="left:253.5px;top:221.3px;font-size:14px;line-height:20px;color:#111;-webkit-text-stroke:.55px #111;">空运</span>
<span class="t" style="left:304px;top:195.8px;font-size:14px;line-height:20px;color:#111;margin-left:-.5px;-webkit-text-stroke:.55px #111;">当月货量<i style="display:inline-block;width:1em;font-style:normal;text-indent:.14em;letter-spacing:0">:</i></span>
<span class="t" style="left:373.5px;top:192px;font-size:20px;line-height:28px;color:#0b3cff;letter-spacing:1.21px;-webkit-text-stroke:.4px #0b3cff;">220</span>
<span class="t" style="left:415px;top:199.5px;font-size:13px;line-height:18px;color:#111;font-weight:700;letter-spacing:-0.5px;">KG</span>
<svg class="abs" style="left:439.5px;top:199.5px;" width="13" height="14" viewBox="0 0 13 14"><defs><linearGradient id="g1" x1="0" x2="0" y1="0" y2="1"><stop offset="0" stop-color="#bff0b0" stop-opacity=".55"/><stop offset=".45" stop-color="#52d23f"/><stop offset="1" stop-color="#2bb81f"/></linearGradient></defs><path d="M3.6 0 H9.4 V6.4 H13 L6.5 14 L0 6.4 H3.6Z" fill="url(#g1)"/></svg>
<div class="abs" style="left:489px;top:191px;width:88px;height:29px;background:#e4f6df;border-radius:4px"></div>
<span class="t" style="left:495.08px;top:193px;font-size:18.5px;line-height:26px;color:#26961c;letter-spacing:1.16px;-webkit-text-stroke:.4px #26961c;">-91.01%</span>
<span class="t" style="left:304px;top:221.8px;font-size:14px;line-height:20px;color:#9b9b9b;letter-spacing:0.07px;margin-left:-.5px;">当月货量<i style="display:inline-block;width:1em;font-style:normal;text-indent:.14em;letter-spacing:0">:</i>2446 KG</span>
<div class="abs" style="left:686px;top:178px;width:448px;height:76px;border:1px solid #e4e9f5;background:linear-gradient(90deg,#edf2fe 0%,#f4f7fe 30%,#fafbff 60%,#fff 78%)"></div>
<div class="abs" style="left:696px;top:190px;width:70px;height:52px;background:rgba(228,235,252,.45)"></div>
<svg class="abs" style="left:711.5px;top:189.5px;" width="41" height="26" viewBox="0 0 41 26"><path d="M15.6 0.4 H17.6 L22.6 4 L30.6 2.4 C32.6 2 33.8 2.6 33.6 3.4 C33.4 4.2 32.4 4.8 30.8 5.2 L18.6 8 C17 8.4 15.6 8.2 14.8 7.2 L14 6.2 L18.6 5Z M10.4 4.4 L11.8 4 L14.4 6 L12.6 6.6Z" fill="#9db0e2"/>
<path d="M0 19 L3 18.6 H25.4 L29 16.8 L40.4 17.6 L37.4 22 V25.8 H2.8 V22.4Z" fill="#9db0e2"/>
<rect x="6.6" y="11.6" width="14" height="3" fill="#9db0e2"/><rect x="6.6" y="15.2" width="14" height="2.8" fill="#9db0e2" opacity=".85"/>
<rect x="22.2" y="14.4" width="7" height="3" fill="#9db0e2"/><rect x="30.4" y="11" width="2.2" height="6" fill="#9db0e2"/><rect x="34.2" y="11" width="2.2" height="6.4" fill="#9db0e2"/></svg>
<span class="t" style="left:718px;top:221.3px;font-size:14px;line-height:20px;color:#111;-webkit-text-stroke:.55px #111;">海空</span>
<span class="t" style="left:768.5px;top:195.8px;font-size:14px;line-height:20px;color:#111;margin-left:-.5px;-webkit-text-stroke:.55px #111;">当月货量<i style="display:inline-block;width:1em;font-style:normal;text-indent:.14em;letter-spacing:0">:</i></span>
<span class="t" style="left:838.5px;top:192px;font-size:20px;line-height:28px;color:#0b3cff;letter-spacing:0.99px;-webkit-text-stroke:.4px #0b3cff;">510.5</span>
<span class="t" style="left:898px;top:199.5px;font-size:13px;line-height:18px;color:#111;font-weight:700;letter-spacing:-0.5px;">KG</span>
<svg class="abs" style="left:922.5px;top:198.5px;" width="14" height="14" viewBox="0 0 14 14"><defs><linearGradient id="r1" x1="0" x2="0" y1="0" y2="1"><stop offset="0" stop-color="#e8202a"/><stop offset=".55" stop-color="#f2545c"/><stop offset="1" stop-color="#ffc8cb" stop-opacity=".45"/></linearGradient></defs><path d="M7 0 L14 7.2 H10 V14 H4 V7.2 H0Z" fill="url(#r1)"/></svg>
<div class="abs" style="left:972px;top:191px;width:94px;height:29px;background:#ffe3e4;border-radius:4px"></div>
<span class="t" style="left:977.81px;top:193px;font-size:18.5px;line-height:26px;color:#e0101c;letter-spacing:0.61px;-webkit-text-stroke:.4px #e0101c;">+51050%</span>
<span class="t" style="left:768.5px;top:221.8px;font-size:14px;line-height:20px;color:#9b9b9b;letter-spacing:-0.36px;margin-left:-.5px;">当月货量<i style="display:inline-block;width:1em;font-style:normal;text-indent:.14em;letter-spacing:0">:</i>0 KG</span>
<div class="abs" style="left:221px;top:264px;width:449px;height:75px;border:1px solid #e4e9f5;background:linear-gradient(90deg,#edf2fe 0%,#f4f7fe 30%,#fafbff 60%,#fff 78%)"></div>
<div class="abs" style="left:231px;top:276px;width:70px;height:52px;background:rgba(228,235,252,.45)"></div>
<svg class="abs" style="left:247.5px;top:276px;" width="41" height="25" viewBox="0 0 41 25"><path d="M0 13.8 L8 13.2 H25 L30.5 11 L40.6 11.6 L37.2 18.4 V24.6 H2.6 V19.6Z" fill="#9db0e2"/><rect x="6.4" y="3" width="13.6" height="9" fill="#9db0e2"/><rect x="29.6" y="0" width="2.4" height="10.6" fill="#9db0e2"/><rect x="33.8" y="0" width="2.2" height="11" fill="#9db0e2"/></svg>
<span class="t" style="left:253.5px;top:307.3px;font-size:14px;line-height:20px;color:#111;-webkit-text-stroke:.55px #111;">海运</span>
<span class="t" style="left:304px;top:280.8px;font-size:14px;line-height:20px;color:#111;margin-left:-.5px;-webkit-text-stroke:.55px #111;">当月货量<i style="display:inline-block;width:1em;font-style:normal;text-indent:.14em;letter-spacing:0">:</i></span>
<span class="t" style="left:373.5px;top:277px;font-size:20px;line-height:28px;color:#0b3cff;letter-spacing:0.73px;-webkit-text-stroke:.4px #0b3cff;">0.8</span>
<span class="t" style="left:408px;top:284.5px;font-size:13px;line-height:18px;color:#111;font-weight:700;letter-spacing:0.8px;">CBM</span>
<svg class="abs" style="left:445px;top:284.5px;" width="13" height="14" viewBox="0 0 13 14"><defs><linearGradient id="g2" x1="0" x2="0" y1="0" y2="1"><stop offset="0" stop-color="#bff0b0" stop-opacity=".55"/><stop offset=".45" stop-color="#52d23f"/><stop offset="1" stop-color="#2bb81f"/></linearGradient></defs><path d="M3.6 0 H9.4 V6.4 H13 L6.5 14 L0 6.4 H3.6Z" fill="url(#g2)"/></svg>
<div class="abs" style="left:494px;top:275.8px;width:70px;height:29px;background:#e4f6df;border-radius:4px"></div>
<span class="t" style="left:505.04px;top:277.8px;font-size:18.5px;line-height:26px;color:#26961c;letter-spacing:1.57px;-webkit-text-stroke:.4px #26961c;">-20%</span>
<span class="t" style="left:304px;top:306.8px;font-size:14px;line-height:20px;color:#9b9b9b;letter-spacing:0.02px;margin-left:-.5px;">当月货量<i style="display:inline-block;width:1em;font-style:normal;text-indent:.14em;letter-spacing:0">:</i>1 CBM</span>
<div class="abs" style="left:686px;top:264px;width:448px;height:75px;border:1px solid #e4e9f5;background:linear-gradient(90deg,#edf2fe 0%,#f4f7fe 30%,#fafbff 60%,#fff 78%)"></div>
<div class="abs" style="left:696px;top:276px;width:70px;height:52px;background:rgba(228,235,252,.45)"></div>
<svg class="abs" style="left:711.5px;top:276px;" width="41" height="25" viewBox="0 0 41 25"><rect x="0" y="0" width="41" height="25" rx="5" fill="#9db0e2"/><path d="M5 5 V20.6 M15.2 5 V20.6 M25.4 5 V20.6 M35.8 5 V20.6" stroke="#d8e1f7" stroke-width="1.5"/></svg>
<span class="t" style="left:704px;top:307.3px;font-size:14px;line-height:20px;color:#111;-webkit-text-stroke:.55px #111;">海运整柜</span>
<span class="t" style="left:768.5px;top:280.8px;font-size:14px;line-height:20px;color:#111;margin-left:-.5px;-webkit-text-stroke:.55px #111;">当月货量<i style="display:inline-block;width:1em;font-style:normal;text-indent:.14em;letter-spacing:0">:</i></span>
<span class="t" style="left:838.5px;top:277px;font-size:20px;line-height:28px;color:#0b3cff;letter-spacing:0.88px;-webkit-text-stroke:.4px #0b3cff;">2</span>
<svg class="abs" style="left:855.5px;top:283.5px;" width="14" height="14" viewBox="0 0 14 14"><defs><linearGradient id="r2" x1="0" x2="0" y1="0" y2="1"><stop offset="0" stop-color="#e8202a"/><stop offset=".55" stop-color="#f2545c"/><stop offset="1" stop-color="#ffc8cb" stop-opacity=".45"/></linearGradient></defs><path d="M7 0 L14 7.2 H10 V14 H4 V7.2 H0Z" fill="url(#r2)"/></svg>
<div class="abs" style="left:905px;top:275.8px;width:72px;height:29px;background:#ffe3e4;border-radius:4px"></div>
<span class="t" style="left:910.79px;top:277.8px;font-size:18.5px;line-height:26px;color:#e0101c;letter-spacing:0.57px;-webkit-text-stroke:.4px #e0101c;">+200%</span>
<span class="t" style="left:768.5px;top:306.8px;font-size:14px;line-height:20px;color:#9b9b9b;letter-spacing:0.04px;margin-left:-.5px;">当月货量<i style="display:inline-block;width:1em;font-style:normal;text-indent:.14em;letter-spacing:0">:</i>0</span>
<div class="abs" style="left:214px;top:175.5px;width:242.5px;height:49px;border:3.6px solid #d0021b;border-radius:3px"></div>
<div class="abs" style="left:221px;top:357px;width:3px;height:15px;background:#1445ff"></div>
<span class="t" style="left:229px;top:355.95px;font-size:13px;line-height:18px;color:#1a1a1a;margin-left:-.5px;-webkit-text-stroke:.3px #1a1a1a;">新增客户环比</span>
<div class="abs" style="left:221px;top:380px;width:913px;height:193.5px;border:1px solid #e1e8f6;background:linear-gradient(90deg,#edf2fe 0%,#f3f6fe 40%,#fafbff 65%,#fff 82%)"></div>
<div class="abs" style="left:232px;top:390px;width:72px;height:62px;background:rgba(228,235,252,.45)"></div>
<svg class="abs" style="left:251.5px;top:391px;" width="36" height="35" viewBox="0 0 36 35"><path d="M14.2 0 C19.4 0 22.4 3.6 22.2 8.8 C22.2 10.4 23 11.2 22.6 12.6 C22.2 13.8 21.4 14.2 21 15.4 C20.4 18.2 19.4 20 18.4 21.2 V23.8 C19.6 25 22.8 26 25.6 27.2 V35 H0 C0 31.6 .4 29.8 2 28.6 C4.6 26.8 8.6 25.4 10.4 23.8 V21.2 C9 19.8 7.8 17.6 7.4 15.2 C6.6 14.4 5.8 13.6 5.8 12.2 C5.8 11 6.4 10.4 6.4 9 C6.2 3.6 9.4 0 14.2 0Z" fill="#9db0e2"/>
<circle cx="26.8" cy="24.6" r="9.2" fill="#eef2fd"/><circle cx="26.8" cy="24.6" r="7.6" fill="#aebde8"/><path d="M26.8 20 V29.2 M22.2 24.6 H31.4" stroke="#eef2fd" stroke-width="2.2" stroke-linecap="round"/></svg>
<span class="t" style="left:255px;top:431.3px;font-size:14px;line-height:20px;color:#111;-webkit-text-stroke:.55px #111;">新增</span>
<span class="t" style="left:307px;top:400.3px;font-size:14px;line-height:20px;color:#111;margin-left:-.5px;-webkit-text-stroke:.55px #111;">当月新增数<i style="display:inline-block;width:1em;font-style:normal;text-indent:.14em;letter-spacing:0">:</i></span>
<span class="t" style="left:391.5px;top:396.5px;font-size:20px;line-height:28px;color:#0b3cff;letter-spacing:-0.12px;-webkit-text-stroke:.4px #0b3cff;">1</span>
<span class="t" style="left:406px;top:401.8px;font-size:14px;line-height:20px;color:#111;margin-left:-.5px;">个</span>
<svg class="abs" style="left:425.5px;top:404px;" width="13" height="14" viewBox="0 0 13 14"><defs><linearGradient id="g3" x1="0" x2="0" y1="0" y2="1"><stop offset="0" stop-color="#bff0b0" stop-opacity=".55"/><stop offset=".45" stop-color="#52d23f"/><stop offset="1" stop-color="#2bb81f"/></linearGradient></defs><path d="M3.6 0 H9.4 V6.4 H13 L6.5 14 L0 6.4 H3.6Z" fill="url(#g3)"/></svg>
<div class="abs" style="left:475px;top:396px;width:72px;height:29px;background:#e4f6df;border-radius:4px"></div>
<span class="t" style="left:481.25px;top:398px;font-size:18.5px;line-height:26px;color:#26961c;letter-spacing:1.5px;-webkit-text-stroke:.4px #26961c;">-100%</span>
<span class="t" style="left:307px;top:427.3px;font-size:14px;line-height:20px;color:#9b9b9b;letter-spacing:0.29px;margin-left:-.5px;">当月新增数<i style="display:inline-block;width:1em;font-style:normal;text-indent:.14em;letter-spacing:0">:</i>0 个</span>
<div class="abs" style="left:232px;top:463px;width:891px;height:38.5px;background:#f5f5f5;border-bottom:1px solid #ececec"></div>
<div class="abs" style="left:232px;top:501.5px;width:891px;height:61px;background:#fff;border-bottom:1px solid #e8e8e8"></div>
<div class="abs" style="left:434px;top:471px;width:1px;height:22px;background:#e6e6e6"></div>
<div class="abs" style="left:586.5px;top:471px;width:1px;height:22px;background:#e6e6e6"></div>
<div class="abs" style="left:706.5px;top:471px;width:1px;height:22px;background:#e6e6e6"></div>
<div class="abs" style="left:830.5px;top:471px;width:1px;height:22px;background:#e6e6e6"></div>
<div class="abs" style="left:957px;top:471px;width:1px;height:22px;background:#e6e6e6"></div>
<div class="abs" style="left:1106px;top:471px;width:1px;height:22px;background:#e6e6e6"></div>
<span class="t" style="left:240px;top:471.79px;font-size:14.2px;line-height:20px;color:#1a1a1a;margin-left:-.5px;-webkit-text-stroke:.25px #1a1a1a;">客户名</span>
<span class="t" style="left:443px;top:471.79px;font-size:14.2px;line-height:20px;color:#1a1a1a;margin-left:-.5px;-webkit-text-stroke:.25px #1a1a1a;">注册时间</span>
<span class="t" style="left:595px;top:471.79px;font-size:14.2px;line-height:20px;color:#1a1a1a;letter-spacing:-0.62px;margin-left:-.5px;-webkit-text-stroke:.25px #1a1a1a;">空运KG</span>
<span class="t" style="left:715px;top:471.79px;font-size:14.2px;line-height:20px;color:#1a1a1a;letter-spacing:0.09px;margin-left:-.5px;-webkit-text-stroke:.25px #1a1a1a;">海运CBM</span>
<span class="t" style="left:839px;top:471.79px;font-size:14.2px;line-height:20px;color:#1a1a1a;letter-spacing:-0.21px;margin-left:-.5px;-webkit-text-stroke:.25px #1a1a1a;">海空联运 KG</span>
<span class="t" style="left:966px;top:471.79px;font-size:14.2px;line-height:20px;color:#1a1a1a;margin-left:-.5px;-webkit-text-stroke:.25px #1a1a1a;">海运整柜</span>
<span class="t" style="left:240px;top:522.29px;font-size:14.2px;line-height:20px;color:#222;letter-spacing:0.25px;">AndyTest0401公司账号</span>
<span class="t" style="left:443px;top:510.7px;font-size:14.2px;line-height:20px;color:#222;letter-spacing:0.84px;">2024-04-01</span>
<span class="t" style="left:443px;top:532.7px;font-size:14.2px;line-height:20px;color:#222;letter-spacing:0.47px;">14:39:32</span>
<span class="t" style="left:595px;top:521.7px;font-size:14.2px;line-height:20px;color:#222;letter-spacing:0.61px;">220</span>
<span class="t" style="left:715px;top:521.7px;font-size:14.2px;line-height:20px;color:#222;letter-spacing:0.61px;">0</span>
<span class="t" style="left:839px;top:521.7px;font-size:14.2px;line-height:20px;color:#222;letter-spacing:0.5px;">510.5</span>
<span class="t" style="left:966px;top:521.7px;font-size:14.2px;line-height:20px;color:#222;letter-spacing:0.61px;">2</span>
<div class="abs" style="left:221px;top:585.5px;width:3px;height:15px;background:#1445ff"></div>
<span class="t" style="left:229px;top:584.45px;font-size:13px;line-height:18px;color:#1a1a1a;margin-left:-.5px;-webkit-text-stroke:.3px #1a1a1a;">沉默客户环比</span>
<div class="abs" style="left:221px;top:609px;width:913px;height:284px;border:1px solid #e1e8f6;background:linear-gradient(90deg,#edf2fe 0%,#f3f6fe 40%,#fafbff 65%,#fff 82%)"></div>
<div class="abs" style="left:232px;top:619px;width:72px;height:62px;background:rgba(228,235,252,.45)"></div>
<svg class="abs" style="left:251.5px;top:619.5px;" width="37" height="36" viewBox="0 0 37 36"><path d="M15.4 0.6 C10 6 10.6 15.6 17.6 20.6 C23.4 24.6 31.6 23.6 36 19 C35.6 28.6 28 36 18.4 36 C8.2 36 0 28.2 0 18.4 C0 9.6 6.4 1.8 15.4 0.6Z" fill="#9db0e2"/><path d="M23.4 3.6 H33 V5.4 L26.4 11.6 H33.4 V13.8 H22.8 V12 L29.6 5.8 H23.4Z" fill="#a5b5e4"/></svg>
<span class="t" style="left:255px;top:661.3px;font-size:14px;line-height:20px;color:#111;-webkit-text-stroke:.55px #111;">沉默</span>
<span class="t" style="left:307.5px;top:630.3px;font-size:14px;line-height:20px;color:#111;margin-left:-.5px;-webkit-text-stroke:.55px #111;">当月沉默客户数<i style="display:inline-block;width:1em;font-style:normal;text-indent:.14em;letter-spacing:0">:</i></span>
<span class="t" style="left:419px;top:626.5px;font-size:20px;line-height:28px;color:#0b3cff;letter-spacing:1.38px;-webkit-text-stroke:.4px #0b3cff;">0</span>
<span class="t" style="left:434.5px;top:631.8px;font-size:14px;line-height:20px;color:#111;margin-left:-.5px;">个</span>
<svg class="abs" style="left:454px;top:634px;" width="13" height="14" viewBox="0 0 13 14"><defs><linearGradient id="g4" x1="0" x2="0" y1="0" y2="1"><stop offset="0" stop-color="#bff0b0" stop-opacity=".55"/><stop offset=".45" stop-color="#52d23f"/><stop offset="1" stop-color="#2bb81f"/></linearGradient></defs><path d="M3.6 0 H9.4 V6.4 H13 L6.5 14 L0 6.4 H3.6Z" fill="url(#g4)"/></svg>
<div class="abs" style="left:503px;top:626.5px;width:70px;height:29px;background:#e4f6df;border-radius:4px"></div>
<span class="t" style="left:519.52px;top:628.5px;font-size:18.5px;line-height:26px;color:#26961c;letter-spacing:2.03px;-webkit-text-stroke:.4px #26961c;">-0%</span>
<span class="t" style="left:307.5px;top:656.8px;font-size:14px;line-height:20px;color:#9b9b9b;letter-spacing:0.23px;margin-left:-.5px;">当月沉默客户数<i style="display:inline-block;width:1em;font-style:normal;text-indent:.14em;letter-spacing:0">:</i>0 个</span>
<div class="abs" style="left:975px;top:629px;width:148px;height:44px;background:#e9eefb;border-radius:4px"></div>
<span class="t" style="left:975px;top:630.29px;font-size:14.2px;line-height:20px;color:#8b9cc6;letter-spacing:0.1px;margin-left:-.5px;">沉默客户<i style="display:inline-block;width:1em;font-style:normal;text-indent:.14em;letter-spacing:0">:</i>连续8周未</span>
<span class="t" style="left:975px;top:652.29px;font-size:14.2px;line-height:20px;color:#8b9cc6;margin-left:-.5px;">下单</span>
<div class="abs" style="left:232px;top:692px;width:891px;height:38.5px;background:#f5f5f5;border-bottom:1px solid #ececec"></div>
<div class="abs" style="left:232px;top:730.5px;width:891px;height:150.5px;background:#fff;border-bottom:1px solid #e8e8e8"></div>
<div class="abs" style="left:411.5px;top:700px;width:1px;height:22px;background:#e6e6e6"></div>
<div class="abs" style="left:539.5px;top:700px;width:1px;height:22px;background:#e6e6e6"></div>
<div class="abs" style="left:669.5px;top:700px;width:1px;height:22px;background:#e6e6e6"></div>
<div class="abs" style="left:806.5px;top:700px;width:1px;height:22px;background:#e6e6e6"></div>
<div class="abs" style="left:937.5px;top:700px;width:1px;height:22px;background:#e6e6e6"></div>
<div class="abs" style="left:1106.5px;top:700px;width:1px;height:22px;background:#e6e6e6"></div>
<span class="t" style="left:240px;top:701.29px;font-size:14.2px;line-height:20px;color:#1a1a1a;margin-left:-.5px;-webkit-text-stroke:.25px #1a1a1a;">客户名</span>
<span class="t" style="left:420px;top:701.29px;font-size:14.2px;line-height:20px;color:#1a1a1a;margin-left:-.5px;-webkit-text-stroke:.25px #1a1a1a;">注册时间</span>
<span class="t" style="left:548px;top:701.29px;font-size:14.2px;line-height:20px;color:#1a1a1a;letter-spacing:-0.62px;margin-left:-.5px;-webkit-text-stroke:.25px #1a1a1a;">空运KG</span>
<span class="t" style="left:678px;top:701.29px;font-size:14.2px;line-height:20px;color:#1a1a1a;letter-spacing:0.09px;margin-left:-.5px;-webkit-text-stroke:.25px #1a1a1a;">海运CBM</span>
<span class="t" style="left:815px;top:701.29px;font-size:14.2px;line-height:20px;color:#1a1a1a;letter-spacing:-0.21px;margin-left:-.5px;-webkit-text-stroke:.25px #1a1a1a;">海空联运 KG</span>
<span class="t" style="left:946px;top:701.29px;font-size:14.2px;line-height:20px;color:#1a1a1a;margin-left:-.5px;-webkit-text-stroke:.25px #1a1a1a;">海运整柜</span>
<svg class="abs" style="left:646px;top:770px;" width="64" height="42" viewBox="0 0 64 42"><ellipse cx="32" cy="34.6" rx="31" ry="6.3" fill="#f3f3f3"/><path d="M9.2 14.3 L20.4 1.6 a1.6 1.6 0 0 1 1.2-.6 H42.4 a1.6 1.6 0 0 1 1.2.6 L54.8 14.3 V33.5 a3 3 0 0 1-3 3 H12.2 a3 3 0 0 1-3-3Z" fill="#fff" stroke="#d9d9d9" stroke-width="1"/><path d="M9.2 14.3 H19.6 a2.4 2.4 0 0 1 2.4 2.4 c0 2 1.6 3.6 3.6 3.6 H38.4 c2 0 3.6-1.6 3.6-3.6 a2.4 2.4 0 0 1 2.4-2.4 H54.8 V33.5 a3 3 0 0 1-3 3 H12.2 a3 3 0 0 1-3-3Z" fill="#fafafa" stroke="#d9d9d9" stroke-width="1"/></svg>
<span class="t" style="left:649.5px;top:821px;font-size:14px;line-height:20px;color:#b2b2b2;">暂无数据</span>
<div class="abs" style="left:1323px;top:457px;width:32px;height:46px;background:#fff;box-shadow:0 0 3px rgba(0,0,0,.06)"></div>
<svg class="abs" style="left:1329px;top:468px;" width="23" height="24" viewBox="0 0 23 24"><path d="M11.4 .6 L1.6 11.6 L11.4 22.8 M21.4 .6 L11.6 11.6 L21.4 22.8" fill="none" stroke="#8c8c8c" stroke-width="2"/></svg>
<svg class="abs" style="left:0px;top:937px;" width="6" height="5" viewBox="0 0 6 5"><path d="M0 0 C0 3 2 5 6 5 H0Z" fill="#000"/></svg>
</div>
<div id="dev">
<div id="devbg"></div>
<div class="abs" style="left:0.7px;top:0px;width:559px;height:25px;background:#0d0d0e"></div>
<div class="abs" style="left:0.7px;top:25px;width:559px;height:1px;background:#2a2a2e"></div>
<div class="abs" style="left:230px;top:0px;width:56px;height:1.6px;background:#0a84ff"></div>
<svg class="abs" style="left:9px;top:6px;" width="14" height="13" viewBox="0 0 14 13"><path d="M12.4 5 V2.6 a1.4 1.4 0 0 0-1.4-1.4 H2.4 a1.4 1.4 0 0 0-1.4 1.4 V9.4 a1.4 1.4 0 0 0 1.4 1.4 H5" fill="none" stroke="#b4b4b8" stroke-width="1.5" stroke-linecap="round"/><path d="M6.6 5.4 L13.4 8.6 L10.6 9.6 L12.6 12.4 L11.4 13 L9.6 10.2 L7.6 12Z" fill="#b4b4b8"/></svg>
<div class="abs" style="left:31px;top:4px;width:1px;height:17px;background:#333338"></div>
<svg class="abs" style="left:39px;top:5.5px;" width="14" height="14" viewBox="0 0 14 14"><rect x="2.6" y="2.6" width="8.8" height="8.8" rx="1.6" fill="none" stroke="#b4b4b8" stroke-width="1.5"/><path d="M7 .2 V2.4 M7 11.6 V13.8 M.2 7 H2.4 M11.6 7 H13.8" stroke="#b4b4b8" stroke-width="1.3"/></svg>
<span class="t" style="left:59px;top:5px;font-size:10.5px;line-height:15px;color:#b4b4b8;letter-spacing:-0.33px;">查看器</span>
<svg class="abs" style="left:105px;top:6px;" width="14" height="13" viewBox="0 0 14 13"><rect x=".8" y=".8" width="12.4" height="11" rx="1.8" fill="none" stroke="#b4b4b8" stroke-width="1.4"/><path d="M4.4 4 L6.8 6.3 L4.4 8.6" fill="none" stroke="#b4b4b8" stroke-width="1.2" stroke-linecap="round" stroke-linejoin="round"/></svg>
<span class="t" style="left:125px;top:5px;font-size:10.5px;line-height:15px;color:#b4b4b8;letter-spacing:-0.33px;">控制台</span>
<svg class="abs" style="left:171px;top:6.5px;" width="15" height="12" viewBox="0 0 15 12"><path d="M1.8 .9 H9.6 a1 1 0 0 1 .8.4 L14 6 L10.4 10.7 a1 1 0 0 1-.8.4 H1.8 a1 1 0 0 1-1-1 V1.9 a1 1 0 0 1 1-1Z" fill="none" stroke="#b4b4b8" stroke-width="1.5" stroke-linejoin="round"/></svg>
<span class="t" style="left:191.5px;top:5px;font-size:10.5px;line-height:15px;color:#b4b4b8;letter-spacing:-0.33px;">调试器</span>
<svg class="abs" style="left:237px;top:6px;" width="15" height="13" viewBox="0 0 15 13"><path d="M3.8 12.4 V1.6 M.8 4.6 L3.8 1.2 L6.8 4.6 M11 .6 V11.4 M8 8.4 L11 11.8 L14 8.4" fill="none" stroke="#f4f4f6" stroke-width="1.6" stroke-linecap="round" stroke-linejoin="round"/></svg>
<span class="t" style="left:258px;top:5px;font-size:10.5px;line-height:15px;color:#ffffff;letter-spacing:-0.25px;-webkit-text-stroke:.45px #fff;">网络</span>
<span class="t" style="left:293px;top:3.5px;font-size:12px;line-height:17px;color:#b4b4b8;font-weight:700;letter-spacing:0.27px;">{ }</span>
<span class="t" style="left:313px;top:5px;font-size:10.5px;line-height:15px;color:#b4b4b8;letter-spacing:-0.3px;">样式编辑器</span>
<svg class="abs" style="left:379.5px;top:7px;" width="12" height="11" viewBox="0 0 12 11"><path d="M1 1 L5.4 5.5 L1 10 M6.6 1 L11 5.5 L6.6 10" fill="none" stroke="#b4b4b8" stroke-width="1.5" stroke-linecap="round" stroke-linejoin="round"/></svg>
<svg class="abs" style="left:423.5px;top:6.5px;" width="12" height="12" viewBox="0 0 12 12"><circle cx="6" cy="6" r="5.8" fill="#ff2160"/><path d="M6 2.7 V6.6" stroke="#2a0812" stroke-width="1.7" stroke-linecap="round"/><circle cx="6" cy="9.1" r="1" fill="#2a0812"/></svg>
<span class="t" style="left:439px;top:5px;font-size:10.5px;line-height:15px;color:#b4b4b8;letter-spacing:-0.2px;">11</span>
<svg class="abs" style="left:458px;top:6px;" width="15" height="13" viewBox="0 0 15 13"><rect x=".8" y=".8" width="13.4" height="11.4" rx="1.8" fill="none" stroke="#b4b4b8" stroke-width="1.5"/><path d="M.8 4.4 H14.2 M5.2 4.4 V12.2" stroke="#b4b4b8" stroke-width="1.4"/></svg>
<div class="abs" style="left:482px;top:4px;width:1px;height:17px;background:#333338"></div>
<svg class="abs" style="left:491px;top:5px;" width="15" height="15" viewBox="0 0 15 15"><path d="M4 4 V2.4 a1.4 1.4 0 0 1 1.4-1.4 H12.2 a1.4 1.4 0 0 1 1.4 1.4 V12.6 a1.4 1.4 0 0 1-1.4 1.4 H9" fill="none" stroke="#b4b4b8" stroke-width="1.5"/><rect x="1" y="5.4" width="6" height="8.6" rx="1.2" fill="none" stroke="#b4b4b8" stroke-width="1.5"/></svg>
<div class="abs" style="left:515px;top:11px;width:3.2px;height:3.2px;border-radius:50%;background:#b4b4b8"></div>
<div class="abs" style="left:520.4px;top:11px;width:3.2px;height:3.2px;border-radius:50%;background:#b4b4b8"></div>
<div class="abs" style="left:525.8px;top:11px;width:3.2px;height:3.2px;border-radius:50%;background:#b4b4b8"></div>
<svg class="abs" style="left:540px;top:7px;" width="11" height="11" viewBox="0 0 11 11"><path d="M1 1 L10 10 M10 1 L1 10" stroke="#b4b4b8" stroke-width="1.6" stroke-linecap="round"/></svg>
<div class="abs" style="left:0.7px;top:26px;width:559px;height:25.5px;background:#1b1b1e"></div>
<div class="abs" style="left:0.7px;top:51px;width:559px;height:1px;background:#2c2c30"></div>
<svg class="abs" style="left:10.5px;top:31px;" width="13" height="15" viewBox="0 0 13 15"><path d="M1 3.4 H12 M4.6 3.2 V2 a1 1 0 0 1 1-1 H7.4 a1 1 0 0 1 1 1 V3.2" fill="none" stroke="#b4b4b8" stroke-width="1.4" stroke-linecap="round"/><path d="M2.2 3.6 V12.2 a1.8 1.8 0 0 0 1.8 1.8 H9 a1.8 1.8 0 0 0 1.8-1.8 V3.6" fill="none" stroke="#b4b4b8" stroke-width="1.5"/><path d="M4.8 6 V11.4 M6.5 6 V11.4 M8.2 6 V11.4" stroke="#b4b4b8" stroke-width="1"/></svg>
<div class="abs" style="left:31px;top:30px;width:1px;height:17px;background:#333338"></div>
<svg class="abs" style="left:41px;top:34.5px;" width="9" height="9" viewBox="0 0 9 9"><path d="M.6 .8 H8.4 L5.4 4.6 V8.2 L3.6 7 V4.6Z" fill="none" stroke="#77777c" stroke-width="1"/></svg>
<span class="t" style="left:53px;top:31.5px;font-size:10.5px;line-height:15px;color:#77777c;letter-spacing:-0.66px;">过滤 URL</span>
<div class="abs" style="left:298px;top:30px;width:1px;height:17px;background:#333338"></div>
<div class="abs" style="left:308px;top:34px;width:1.4px;height:9px;background:#5c5c61"></div>
<div class="abs" style="left:314.4px;top:34px;width:1.4px;height:9px;background:#5c5c61"></div>
<svg class="abs" style="left:331.5px;top:33.5px;" width="11" height="11" viewBox="0 0 11 11"><path d="M5.5 .6 V10.4 M.6 5.5 H10.4" stroke="#b4b4b8" stroke-width="1.5" stroke-linecap="round"/></svg>
<svg class="abs" style="left:355.5px;top:32.5px;" width="13" height="13" viewBox="0 0 13 13"><circle cx="5.2" cy="5.2" r="4" fill="none" stroke="#b4b4b8" stroke-width="1.5"/><path d="M8.2 8.2 L12 12" stroke="#b4b4b8" stroke-width="1.7" stroke-linecap="round"/></svg>
<svg class="abs" style="left:381.5px;top:33px;" width="12" height="12" viewBox="0 0 12 12"><circle cx="6" cy="6" r="4.9" fill="none" stroke="#b4b4b8" stroke-width="1.5"/><path d="M2.6 2.6 L9.4 9.4" stroke="#b4b4b8" stroke-width="1.5"/></svg>
<div class="abs" style="left:401px;top:30px;width:1px;height:17px;background:#333338"></div>
<div class="abs" style="left:408px;top:33px;width:11px;height:11px;border:1px solid #7d7d96;border-radius:2px;background:#1f1f24"></div>
<span class="t" style="left:422px;top:31.5px;font-size:10.5px;line-height:15px;color:#b4b4b8;letter-spacing:-1.12px;">禁用缓存</span>
<div class="abs" style="left:468px;top:30px;width:1px;height:17px;background:#333338"></div>
<span class="t" style="left:481px;top:31px;font-size:10.5px;line-height:15px;color:#b4b4b8;letter-spacing:-1.17px;">不节流</span>
<svg class="abs" style="left:513px;top:34.5px;" width="6" height="9" viewBox="0 0 6 9"><path d="M.4 3.4 L3 .4 L5.6 3.4Z M.4 5.6 L3 8.6 L5.6 5.6Z" fill="#b4b4b8"/></svg>
<div class="abs" style="left:529px;top:30px;width:1px;height:17px;background:#333338"></div>
<svg class="abs" style="left:536px;top:31.5px;" width="15" height="15" viewBox="0 0 15 15"><rect x="6.6" y="0" width="1.8" height="3.4" rx=".4" fill="#b4b4b8" transform="rotate(0 7.5 7.5)"/><rect x="6.6" y="0" width="1.8" height="3.4" rx=".4" fill="#b4b4b8" transform="rotate(45 7.5 7.5)"/><rect x="6.6" y="0" width="1.8" height="3.4" rx=".4" fill="#b4b4b8" transform="rotate(90 7.5 7.5)"/><rect x="6.6" y="0" width="1.8" height="3.4" rx=".4" fill="#b4b4b8" transform="rotate(135 7.5 7.5)"/><rect x="6.6" y="0" width="1.8" height="3.4" rx=".4" fill="#b4b4b8" transform="rotate(180 7.5 7.5)"/><rect x="6.6" y="0" width="1.8" height="3.4" rx=".4" fill="#b4b4b8" transform="rotate(225 7.5 7.5)"/><rect x="6.6" y="0" width="1.8" height="3.4" rx=".4" fill="#b4b4b8" transform="rotate(270 7.5 7.5)"/><rect x="6.6" y="0" width="1.8" height="3.4" rx=".4" fill="#b4b4b8" transform="rotate(315 7.5 7.5)"/><circle cx="7.5" cy="7.5" r="3.6" fill="none" stroke="#b4b4b8" stroke-width="1.8"/></svg>
<div class="abs" style="left:0.7px;top:52px;width:559px;height:25.5px;background:#1b1b1e"></div>
<div class="abs" style="left:0.7px;top:77px;width:559px;height:1px;background:#2c2c30"></div>
<div class="abs" style="left:12px;top:56.5px;width:30px;height:16.5px;background:#38383d;border-radius:2.5px"></div>
<span class="t" style="left:17px;top:57px;font-size:10.5px;line-height:15px;color:#f0f0f2;letter-spacing:-1px;">所有</span>
<span class="t" style="left:49.3px;top:57px;font-size:10.5px;line-height:15px;color:#b4b4b8;letter-spacing:-0.22px;">HTML</span>
<span class="t" style="left:89.7px;top:57px;font-size:10.5px;line-height:15px;color:#b4b4b8;letter-spacing:-0.63px;">CSS</span>
<span class="t" style="left:122px;top:57px;font-size:10.5px;line-height:15px;color:#b4b4b8;letter-spacing:-0.38px;">JS</span>
<span class="t" style="left:146.3px;top:57px;font-size:10.5px;line-height:15px;color:#b4b4b8;letter-spacing:-0.59px;">XHR</span>
<span class="t" style="left:179.5px;top:57px;font-size:10.5px;line-height:15px;color:#b4b4b8;letter-spacing:-1px;">字体</span>
<span class="t" style="left:211.6px;top:57px;font-size:10.5px;line-height:15px;color:#b4b4b8;letter-spacing:-1px;">图像</span>
<span class="t" style="left:244px;top:57px;font-size:10.5px;line-height:15px;color:#b4b4b8;letter-spacing:-1px;">媒体</span>
<span class="t" style="left:276px;top:57px;font-size:10.5px;line-height:15px;color:#b4b4b8;letter-spacing:-0.46px;">WS</span>
<span class="t" style="left:305px;top:57px;font-size:10.5px;line-height:15px;color:#b4b4b8;letter-spacing:-1.25px;">其他</span>
<div class="abs" style="left:0.7px;top:78px;width:559px;height:21px;background:#131314"></div>
<div class="abs" style="left:0.7px;top:99px;width:559px;height:1px;background:#2a2a2e"></div>
<div class="abs" style="left:40.6px;top:78px;width:1px;height:21px;background:#2a2a2e"></div>
<div class="abs" style="left:78px;top:78px;width:1px;height:21px;background:#2a2a2e"></div>
<div class="abs" style="left:123px;top:78px;width:1px;height:21px;background:#2a2a2e"></div>
<div class="abs" style="left:309.1px;top:78px;width:1px;height:21px;background:#2a2a2e"></div>
<div class="abs" style="left:383px;top:78px;width:1px;height:21px;background:#2a2a2e"></div>
<div class="abs" style="left:421px;top:78px;width:1px;height:21px;background:#2a2a2e"></div>
<div class="abs" style="left:495.1px;top:78px;width:1px;height:21px;background:#2a2a2e"></div>
<span class="t" style="left:6.3px;top:81.2px;font-size:10.5px;line-height:15px;color:#b4b4b8;letter-spacing:-1.15px;">状态</span>
<span class="t" style="left:46.7px;top:81.2px;font-size:10.5px;line-height:15px;color:#b4b4b8;letter-spacing:-1.15px;">方法</span>
<span class="t" style="left:83.7px;top:81.2px;font-size:10.5px;line-height:15px;color:#b4b4b8;letter-spacing:-1.15px;">域名</span>
<span class="t" style="left:128.5px;top:81.2px;font-size:10.5px;line-height:15px;color:#b4b4b8;letter-spacing:-1.25px;">文件</span>
<span class="t" style="left:314.7px;top:81.2px;font-size:10.5px;line-height:15px;color:#b4b4b8;letter-spacing:-1.33px;">发起者</span>
<span class="t" style="left:389px;top:81.2px;font-size:10.5px;line-height:15px;color:#b4b4b8;letter-spacing:-1.15px;">类型</span>
<span class="t" style="left:426px;top:81.2px;font-size:10.5px;line-height:15px;color:#b4b4b8;letter-spacing:-1.25px;">传输</span>
<span class="t" style="left:500.4px;top:81.2px;font-size:10.5px;line-height:15px;color:#b4b4b8;letter-spacing:-1.25px;">大小</span>
<div class="abs" style="left:0.7px;top:100px;width:559px;height:235px;background:#1b1b1e"></div>
<div class="abs" style="left:0.7px;top:100px;width:559px;height:22px;background:#1c3c7c"></div>
<div class="abs" style="left:6px;top:105px;width:22px;height:13px;background:#70df6a;border-radius:3px"></div>
<span class="t" style="left:8.16px;top:105.9px;font-size:10px;line-height:14px;color:#0c2a10;font-weight:700;font-family:'Liberation Mono',monospace;letter-spacing:-0.17px;">200</span>
<span class="t" style="left:46.7px;top:104px;font-size:10.5px;line-height:15px;color:#ffffff;letter-spacing:-0.86px;">GET</span>
<svg class="abs" style="left:82px;top:105px;" width="12" height="12" viewBox="0 0 12 12"><rect x="2.2" y="5.4" width="7.6" height="5.8" rx="1" fill="#e8e8ee"/><path d="M3.8 5.4 V4 a2.2 2.2 0 0 1 4.4 0 V5.4" fill="none" stroke="#e8e8ee" stroke-width="1.2"/><path d="M0.6 11 L11.4 1" stroke="#1c3c7c" stroke-width="2.4"/><path d="M0.6 11 L11.4 1" stroke="#e8e8ee" stroke-width="1"/></svg>
<span class="t" style="left:97px;top:104px;font-size:10.5px;line-height:15px;color:#ffffff;letter-spacing:-0.21px;">tes...</span>
<span class="t" style="left:128.5px;top:104px;font-size:10.5px;line-height:15px;color:#ffffff;letter-spacing:-0.06px;">GetCargoVolume?userGuid=60070951</span>
<span class="t" style="left:314.6px;top:104px;font-size:10.5px;line-height:15px;color:#ffffff;letter-spacing:0.09px;"><span style="text-decoration:underline;text-underline-offset:1.5px">umi.1f3f8f2</span>...</span>
<span class="t" style="left:389px;top:104px;font-size:10.5px;line-height:15px;color:#ffffff;letter-spacing:-0.07px;">json</span>
<span class="t" style="left:426px;top:104px;font-size:10.5px;line-height:15px;color:#ffffff;letter-spacing:-0.09px;">1.10 kB</span>
<span class="t" style="left:500.4px;top:104px;font-size:10.5px;line-height:15px;color:#ffffff;letter-spacing:-0.49px;">901 字节</span>
<div class="abs" style="left:40.6px;top:100px;width:1px;height:22px;background:rgba(0,0,0,0)"></div>
<div class="abs" style="left:78px;top:100px;width:1px;height:22px;background:rgba(0,0,0,0)"></div>
<div class="abs" style="left:123px;top:100px;width:1px;height:22px;background:rgba(0,0,0,0)"></div>
<div class="abs" style="left:309.1px;top:100px;width:1px;height:22px;background:rgba(0,0,0,0)"></div>
<div class="abs" style="left:383px;top:100px;width:1px;height:22px;background:rgba(0,0,0,0)"></div>
<div class="abs" style="left:421px;top:100px;width:1px;height:22px;background:rgba(0,0,0,0)"></div>
<div class="abs" style="left:495.1px;top:100px;width:1px;height:22px;background:rgba(0,0,0,0)"></div>
<div class="abs" style="left:0.7px;top:122px;width:559px;height:21px;background:#232327"></div>
<div class="abs" style="left:6px;top:125.9px;width:22px;height:13px;background:#70df6a;border-radius:3px"></div>
<span class="t" style="left:8.16px;top:126.8px;font-size:10px;line-height:14px;color:#0c2a10;font-weight:700;font-family:'Liberation Mono',monospace;letter-spacing:-0.17px;">200</span>
<span class="t" style="left:46.7px;top:124.9px;font-size:10.5px;line-height:15px;color:#a8a8ad;letter-spacing:-0.86px;">GET</span>
<svg class="abs" style="left:82px;top:125.9px;" width="12" height="12" viewBox="0 0 12 12"><rect x="2.2" y="5.4" width="7.6" height="5.8" rx="1" fill="#8f8f95"/><path d="M3.8 5.4 V4 a2.2 2.2 0 0 1 4.4 0 V5.4" fill="none" stroke="#8f8f95" stroke-width="1.2"/><path d="M0.6 11 L11.4 1" stroke="#232327" stroke-width="2.4"/><path d="M0.6 11 L11.4 1" stroke="#ff3b6b" stroke-width="1"/></svg>
<span class="t" style="left:97px;top:124.9px;font-size:10.5px;line-height:15px;color:#a8a8ad;letter-spacing:-0.21px;">tes...</span>
<span class="t" style="left:128.5px;top:124.9px;font-size:10.5px;line-height:15px;color:#a8a8ad;letter-spacing:-0.06px;">GetCustomerVolume?ReportType=Mor</span>
<span class="t" style="left:314.6px;top:124.9px;font-size:10.5px;line-height:15px;color:#4a9eff;letter-spacing:0.09px;"><span style="text-decoration:underline;text-underline-offset:1.5px">umi.1f3f8f2</span>...</span>
<span class="t" style="left:389px;top:124.9px;font-size:10.5px;line-height:15px;color:#a8a8ad;letter-spacing:-0.07px;">json</span>
<span class="t" style="left:426px;top:124.9px;font-size:10.5px;line-height:15px;color:#a8a8ad;letter-spacing:-0.49px;">991 字节</span>
<span class="t" style="left:500.4px;top:124.9px;font-size:10.5px;line-height:15px;color:#a8a8ad;letter-spacing:-0.49px;">792 字节</span>
<div class="abs" style="left:40.6px;top:122px;width:1px;height:21px;background:rgba(255,255,255,.07)"></div>
<div class="abs" style="left:78px;top:122px;width:1px;height:21px;background:rgba(255,255,255,.07)"></div>
<div class="abs" style="left:123px;top:122px;width:1px;height:21px;background:rgba(255,255,255,.07)"></div>
<div class="abs" style="left:309.1px;top:122px;width:1px;height:21px;background:rgba(255,255,255,.07)"></div>
<div class="abs" style="left:383px;top:122px;width:1px;height:21px;background:rgba(255,255,255,.07)"></div>
<div class="abs" style="left:421px;top:122px;width:1px;height:21px;background:rgba(255,255,255,.07)"></div>
<div class="abs" style="left:495.1px;top:122px;width:1px;height:21px;background:rgba(255,255,255,.07)"></div>
<div class="abs" style="left:0.7px;top:143px;width:559px;height:22px;background:#1b1b1e"></div>
<div class="abs" style="left:6px;top:148px;width:22px;height:13px;background:#70df6a;border-radius:3px"></div>
<span class="t" style="left:8.16px;top:148.9px;font-size:10px;line-height:14px;color:#0c2a10;font-weight:700;font-family:'Liberation Mono',monospace;letter-spacing:-0.17px;">200</span>
<span class="t" style="left:46.7px;top:147px;font-size:10.5px;line-height:15px;color:#a8a8ad;letter-spacing:-0.86px;">GET</span>
<svg class="abs" style="left:82px;top:148px;" width="12" height="12" viewBox="0 0 12 12"><rect x="2.2" y="5.4" width="7.6" height="5.8" rx="1" fill="#8f8f95"/><path d="M3.8 5.4 V4 a2.2 2.2 0 0 1 4.4 0 V5.4" fill="none" stroke="#8f8f95" stroke-width="1.2"/><path d="M0.6 11 L11.4 1" stroke="#232327" stroke-width="2.4"/><path d="M0.6 11 L11.4 1" stroke="#ff3b6b" stroke-width="1"/></svg>
<span class="t" style="left:97px;top:147px;font-size:10.5px;line-height:15px;color:#a8a8ad;letter-spacing:-0.21px;">tes...</span>
<span class="t" style="left:128.5px;top:147px;font-size:10.5px;line-height:15px;color:#a8a8ad;letter-spacing:-0.06px;">GetCustomerVolume?ReportType=Mor</span>
<span class="t" style="left:314.6px;top:147px;font-size:10.5px;line-height:15px;color:#4a9eff;letter-spacing:0.09px;"><span style="text-decoration:underline;text-underline-offset:1.5px">umi.1f3f8f2</span>...</span>
<span class="t" style="left:389px;top:147px;font-size:10.5px;line-height:15px;color:#a8a8ad;letter-spacing:-0.07px;">json</span>
<span class="t" style="left:426px;top:147px;font-size:10.5px;line-height:15px;color:#a8a8ad;letter-spacing:-0.41px;">409 字节</span>
<span class="t" style="left:500.4px;top:147px;font-size:10.5px;line-height:15px;color:#a8a8ad;letter-spacing:-0.49px;">210 字节</span>
<div class="abs" style="left:40.6px;top:143px;width:1px;height:22px;background:rgba(255,255,255,.07)"></div>
<div class="abs" style="left:78px;top:143px;width:1px;height:22px;background:rgba(255,255,255,.07)"></div>
<div class="abs" style="left:123px;top:143px;width:1px;height:22px;background:rgba(255,255,255,.07)"></div>
<div class="abs" style="left:309.1px;top:143px;width:1px;height:22px;background:rgba(255,255,255,.07)"></div>
<div class="abs" style="left:383px;top:143px;width:1px;height:22px;background:rgba(255,255,255,.07)"></div>
<div class="abs" style="left:421px;top:143px;width:1px;height:22px;background:rgba(255,255,255,.07)"></div>
<div class="abs" style="left:495.1px;top:143px;width:1px;height:22px;background:rgba(255,255,255,.07)"></div>
<div class="abs" style="left:0.7px;top:335px;width:559px;height:21px;background:#1b1b1e;border-top:1px solid #303034"></div>
<div class="abs" style="left:5.5px;top:338px;width:23.5px;height:16.5px;background:#2d2d31;border-radius:2px"></div>
<svg class="abs" style="left:11px;top:339.5px;" width="13" height="14" viewBox="0 0 13 14"><circle cx="6.5" cy="8" r="4.8" fill="none" stroke="#b4b4b8" stroke-width="1.4"/><path d="M5 1 H8 M6.5 1 V3 M6.5 8 L8.6 5.6" stroke="#b4b4b8" stroke-width="1.3" stroke-linecap="round"/></svg>
<span class="t" style="left:39px;top:339px;font-size:10.5px;line-height:15px;color:#b4b4b8;letter-spacing:-0.75px;">3 个请求</span>
<div class="abs" style="left:86.5px;top:339px;width:1px;height:14px;background:#333338"></div>
<span class="t" style="left:96px;top:339px;font-size:10.5px;line-height:15px;color:#b4b4b8;letter-spacing:-0.09px;">已传输 1.90 kB / 2.50 kB</span>
<div class="abs" style="left:219.5px;top:339px;width:1px;height:14px;background:#333338"></div>
<span class="t" style="left:229.3px;top:339px;font-size:10.5px;line-height:15px;color:#b4b4b8;letter-spacing:-0.55px;">完成<i style="display:inline-block;width:1em;font-style:normal;text-indent:.14em;letter-spacing:0">:</i>567 毫秒</span>
<div class="abs" style="left:0.7px;top:356px;width:559px;height:3px;background:#3a3a3d"></div>
<div class="abs" style="left:0.7px;top:359px;width:559px;height:20px;background:#0d0d0e"></div>
<div class="abs" style="left:0.7px;top:379px;width:559px;height:1px;background:#2a2a2e"></div>
<div class="abs" style="left:175px;top:359px;width:41px;height:1.4px;background:#0a84ff"></div>
<svg class="abs" style="left:8.5px;top:363.5px;" width="12" height="12" viewBox="0 0 12 12"><rect x=".7" y=".7" width="10.6" height="10.6" rx="1.2" fill="none" stroke="#85858a" stroke-width="1.2"/><rect x="3" y="2.6" width="6" height="4.6" fill="#85858a" opacity=".55"/><path d="M.7 9 H11.3" stroke="#85858a" stroke-width="1"/></svg>
<span class="t" style="left:37px;top:362px;font-size:10.5px;line-height:15px;color:#b4b4b8;letter-spacing:-0.33px;">消息头</span>
<span class="t" style="left:89.4px;top:362px;font-size:10.5px;line-height:15px;color:#b4b4b8;letter-spacing:0.3px;">Cookie</span>
<span class="t" style="left:144px;top:362px;font-size:10.5px;line-height:15px;color:#b4b4b8;letter-spacing:-0.5px;">请求</span>
<span class="t" style="left:185.6px;top:362px;font-size:10.5px;line-height:15px;color:#ffffff;letter-spacing:-0.5px;-webkit-text-stroke:.45px #fff;">响应</span>
<span class="t" style="left:227px;top:362px;font-size:10.5px;line-height:15px;color:#b4b4b8;letter-spacing:-0.5px;">耗时</span>
<span class="t" style="left:268.4px;top:362px;font-size:10.5px;line-height:15px;color:#b4b4b8;letter-spacing:-0.33px;">栈跟踪</span>
<div class="abs" style="left:544.5px;top:359px;width:1px;height:20px;background:#2a2a2e"></div>
<svg class="abs" style="left:548.5px;top:367px;" width="8" height="5" viewBox="0 0 8 5"><path d="M.2 .4 H7.8 L4 4.8Z" fill="#b4b4b8"/></svg>
<div class="abs" style="left:0.7px;top:380px;width:559px;height:22px;background:#1b1b1e"></div>
<div class="abs" style="left:0.7px;top:402px;width:559px;height:1px;background:#2c2c30"></div>
<svg class="abs" style="left:10px;top:387px;" width="9" height="9" viewBox="0 0 9 9"><path d="M.6 .8 H8.4 L5.4 4.6 V8.2 L3.6 7 V4.6Z" fill="none" stroke="#77777c" stroke-width="1"/></svg>
<span class="t" style="left:23px;top:383.9px;font-size:10.5px;line-height:15px;color:#77777c;letter-spacing:-1.25px;">过滤属性</span>
<div class="abs" style="left:0.7px;top:403px;width:559px;height:21.5px;background:#131314"></div>
<div class="abs" style="left:0.7px;top:424.5px;width:559px;height:1px;background:#26262a"></div>
<span class="t" style="left:5.7px;top:405.9px;font-size:10.5px;line-height:15px;color:#c0c0c4;letter-spacing:-0.5px;">JSON</span>
<span class="t" style="left:505.7px;top:406px;font-size:10.5px;line-height:15px;color:#b4b4b8;letter-spacing:-1.15px;">原始</span>
<div class="abs" style="left:529px;top:407.5px;width:24px;height:12.5px;background:#5b5b60;border-radius:6.5px"></div>
<div class="abs" style="left:531.5px;top:409.7px;width:8px;height:8px;background:#b9b9bd;border-radius:50%"></div>
<div class="abs" style="left:0.7px;top:425.5px;width:559px;height:517px;background:#141414"></div>
<div class="abs" style="left:0.7px;top:658px;width:559px;height:17.7px;background:#1c3c7c"></div>
<span class="t" style="left:20px;top:427px;font-size:10.5px;line-height:15px;color:#75bfff;letter-spacing:0.18px;"><span style="color:#75bfff">code: </span><span style="color:#86de74;-webkit-text-stroke:.3px #86de74">200</span></span>
<span class="t" style="left:20px;top:444.94px;font-size:10.5px;line-height:15px;color:#75bfff;letter-spacing:-0.23px;"><span style="color:#75bfff">message: </span><span style="color:#ff7de9">"操作成功"</span></span>
<span class="t" style="left:20px;top:462.88px;font-size:10.5px;line-height:15px;color:#75bfff;letter-spacing:0.09px;"><span style="color:#75bfff">extend: </span><span style="color:#a0a0a4">null</span></span>
<span class="t" style="left:20px;top:480.82px;font-size:10.5px;line-height:15px;color:#75bfff;letter-spacing:0.19px;"><span style="color:#75bfff">status: </span><span style="color:#ff7de9">"success"</span></span>
<span class="t" style="left:20px;top:498.76px;font-size:10.5px;line-height:15px;color:#75bfff;letter-spacing:0.03px;"><span style="color:#75bfff">timestamp: </span><span style="color:#86de74;-webkit-text-stroke:.3px #86de74">1711960520</span></span>
<span class="t" style="left:20px;top:516.7px;font-size:10.5px;line-height:15px;color:#75bfff;letter-spacing:0.04px;"><span style="color:#75bfff">data: Object { reportType: </span><span style="color:#ff7de9">"MonthlyReport"</span><span style="color:#75bfff">, saleReportGoodsSubDtos: […] }</span></span>
<svg class="abs" style="left:7.8px;top:521.2px;" width="8" height="6" viewBox="0 0 8 6"><path d="M0 .6 H8 L4 5.6Z" fill="#8f8f95"/></svg>
<span class="t" style="left:34px;top:534.64px;font-size:10.5px;line-height:15px;color:#75bfff;letter-spacing:0.17px;"><span style="color:#75bfff">reportType: </span><span style="color:#ff7de9">"MonthlyReport"</span></span>
<span class="t" style="left:34px;top:552.58px;font-size:10.5px;line-height:15px;color:#75bfff;letter-spacing:-0.15px;"><span style="color:#75bfff">saleReportGoodsSubDtos: [ {…}, {…}, {…}, {…} ]</span></span>
<svg class="abs" style="left:21.8px;top:557.08px;" width="8" height="6" viewBox="0 0 8 6"><path d="M0 .6 H8 L4 5.6Z" fill="#8f8f95"/></svg>
<span class="t" style="left:48.6px;top:570.52px;font-size:10.5px;line-height:15px;color:#75bfff;letter-spacing:0.04px;"><span style="color:#75bfff">0: Object { transportType: </span><span style="color:#ff7de9">"AirTransport"</span><span style="color:#75bfff">, mainCalcUnitCount: </span><span style="color:#86de74;-webkit-text-stroke:.3px #86de74">220</span><span style="color:#75bfff">, lastMainCalcUnitCount: </span><span style="color:#86de74;-webkit-text-stroke:.3px #86de74">2446</span><span style="color:#75bfff">, … }</span></span>
<svg class="abs" style="left:36.4px;top:575.02px;" width="8" height="6" viewBox="0 0 8 6"><path d="M0 .6 H8 L4 5.6Z" fill="#8f8f95"/></svg>
<span class="t" style="left:62.6px;top:588.46px;font-size:10.5px;line-height:15px;color:#75bfff;letter-spacing:0.12px;"><span style="color:#75bfff">transportType: </span><span style="color:#ff7de9">"AirTransport"</span></span>
<span class="t" style="left:62.6px;top:606.4px;font-size:10.5px;line-height:15px;color:#75bfff;letter-spacing:0.07px;"><span style="color:#75bfff">mainCalcUnitCount: </span><span style="color:#86de74;-webkit-text-stroke:.3px #86de74">220</span></span>
<span class="t" style="left:62.6px;top:624.34px;font-size:10.5px;line-height:15px;color:#75bfff;letter-spacing:0.1px;"><span style="color:#75bfff">lastMainCalcUnitCount: </span><span style="color:#86de74;-webkit-text-stroke:.3px #86de74">2446</span></span>
<span class="t" style="left:62.6px;top:642.28px;font-size:10.5px;line-height:15px;color:#75bfff;letter-spacing:0.13px;"><span style="color:#75bfff">calcUnit: </span><span style="color:#ff7de9">"KG"</span></span>
<span class="t" style="left:62.6px;top:660.22px;font-size:10.5px;line-height:15px;color:#75bfff;letter-spacing:0.11px;"><span style="color:#fff;-webkit-text-stroke:.25px #fff">extraCountDesc: "2.0000CBM"</span></span>
<span class="t" style="left:62.6px;top:678.16px;font-size:10.5px;line-height:15px;color:#75bfff;letter-spacing:0.12px;"><span style="color:#75bfff">lastExtraCountDesc: </span><span style="color:#ff7de9">"0.0000"</span></span>
<span class="t" style="left:62.6px;top:696.1px;font-size:10.5px;line-height:15px;color:#75bfff;letter-spacing:0.02px;"><span style="color:#75bfff">raisingRate: </span><span style="color:#ff7de9">"-91.01%"</span></span>
<span class="t" style="left:48.6px;top:714px;font-size:10.5px;line-height:15px;color:#75bfff;letter-spacing:-0.01px;"><span style="color:#75bfff">1: Object { transportType: </span><span style="color:#ff7de9">"OceanAndAir"</span><span style="color:#75bfff">, mainCalcUnitCount: </span><span style="color:#86de74;-webkit-text-stroke:.3px #86de74">510.5</span><span style="color:#75bfff">, lastMainCalcUnitCount: </span><span style="color:#86de74;-webkit-text-stroke:.3px #86de74">0</span><span style="color:#75bfff">, … }</span></span>
<svg class="abs" style="left:38.2px;top:717.5px;" width="6" height="8" viewBox="0 0 6 8"><path d="M.6 0 V8 L5.6 4Z" fill="#8f8f95"/></svg>
<span class="t" style="left:48.6px;top:731.5px;font-size:10.5px;line-height:15px;color:#75bfff;letter-spacing:0.01px;"><span style="color:#75bfff">2: Object { transportType: </span><span style="color:#ff7de9">"OceanShipping"</span><span style="color:#75bfff">, mainCalcUnitCount: </span><span style="color:#86de74;-webkit-text-stroke:.3px #86de74">0.8</span><span style="color:#75bfff">, lastMainCalcUnitCount: </span><span style="color:#86de74;-webkit-text-stroke:.3px #86de74">1</span><span style="color:#75bfff">, … }</span></span>
<svg class="abs" style="left:38.2px;top:735px;" width="6" height="8" viewBox="0 0 6 8"><path d="M.6 0 V8 L5.6 4Z" fill="#8f8f95"/></svg>
<span class="t" style="left:48.6px;top:749.3px;font-size:10.5px;line-height:15px;color:#75bfff;letter-spacing:0.01px;"><span style="color:#75bfff">3: Object { transportType: </span><span style="color:#ff7de9">"OceanShippingFullCabenit"</span><span style="color:#75bfff">, mainCalcUnitCount: </span><span style="color:#86de74;-webkit-text-stroke:.3px #86de74">2</span><span style="color:#75bfff">, lastMainCalcUnitCount: </span><span style="color:#86de74;-webkit-text-stroke:.3px #86de74">0</span><span style="color:#75bfff">, …</span></span>
<svg class="abs" style="left:38.2px;top:752.8px;" width="6" height="8" viewBox="0 0 6 8"><path d="M.6 0 V8 L5.6 4Z" fill="#8f8f95"/></svg>
<span class="t" style="left:61.7px;top:764.1px;font-size:10.5px;line-height:15px;color:#75bfff;"><span style="color:#75bfff">}</span></span>
<svg class="abs" style="left:553px;top:936px;" width="6" height="6" viewBox="0 0 6 6"><path d="M6 0 C6 3.5 3.5 6 0 6 H6Z" fill="#000"/></svg>
<div class="abs" style="left:44px;top:658px;width:205.5px;height:21.5px;border:3.2px solid #d0021b;border-radius:3px"></div>
</div>
</body>
</html>
